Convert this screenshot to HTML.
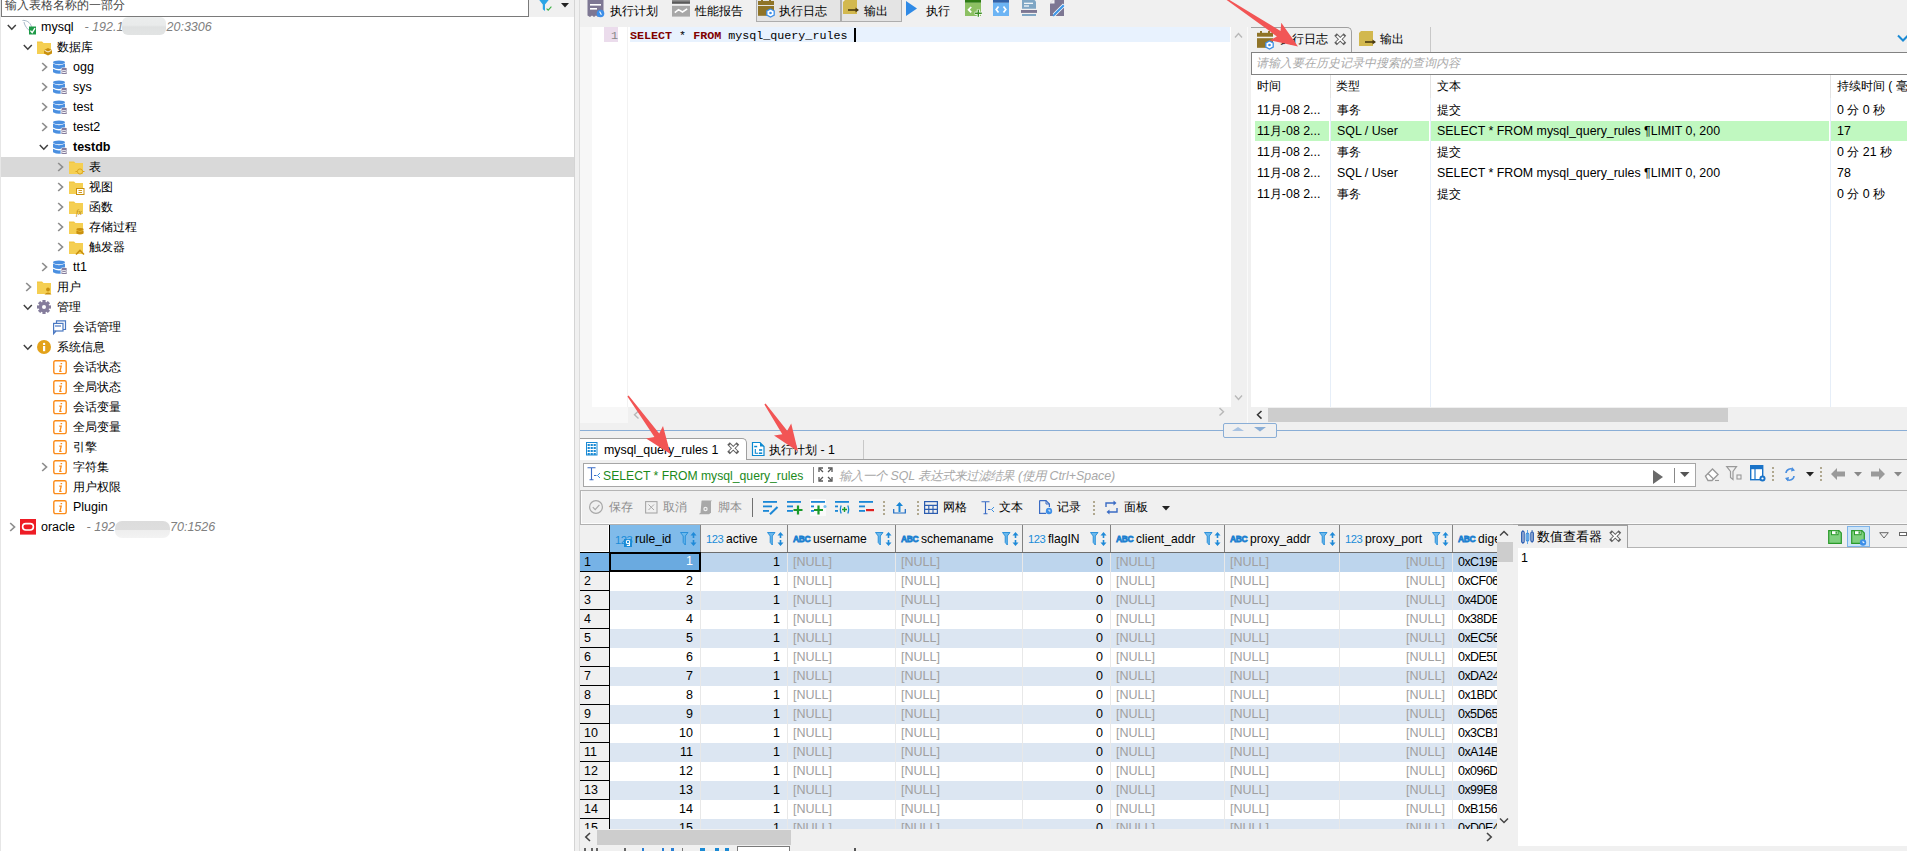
<!DOCTYPE html><html><head><meta charset="utf-8"><style>
*{margin:0;padding:0}
html,body{width:1907px;height:851px;overflow:hidden;background:#f0f0f0}
body{position:relative;font-family:"Liberation Sans",sans-serif;font-size:12px;color:#000}
.a{position:absolute}
.t{position:absolute;white-space:nowrap}
svg{position:absolute;overflow:visible}
b{font-weight:bold}
</style></head><body>
<div class="a" style="left:0px;top:0px;width:575px;height:851px;background:#fff"></div>
<div class="a" style="left:0px;top:0px;width:1px;height:851px;background:#e6e6e6"></div>
<div class="a" style="left:1px;top:-2px;width:528px;height:19px;background:#fff;border:1px solid #7a7a7a;box-sizing:border-box"></div>
<div class="t" style="left:5px;top:-3.5px;height:16px;line-height:16px;color:#444;font-size:12px">输入表格名称的一部分</div>
<div class="a" style="left:529px;top:0px;width:45px;height:17px;background:#f0f0f0"></div>
<svg style="left:538px;top:-1px" width="18" height="14" viewBox="0 0 18 14"><path d="M0.5 0 H11.5 L7 5.5 V12 L4.8 10.2 V5.5Z" fill="#2aa4e6"/><path d="M8.6 9.6 L10.2 11.2 L13.4 7.6" fill="none" stroke="#3cb043" stroke-width="1.1"/></svg>
<svg style="left:561px;top:3px" width="9" height="6" viewBox="0 0 9 6"><path d="M0 0 H8 L4 4.5Z" fill="#222"/></svg>
<div class="a" style="left:574px;top:0px;width:1px;height:851px;background:#d4d4d4"></div>
<div class="a" style="left:575px;top:0px;width:4px;height:851px;background:#f0f0f0"></div>
<div class="a" style="left:579px;top:0px;width:1px;height:851px;background:#dcdcdc"></div>
<div class="a" style="left:1px;top:157px;width:573px;height:20px;background:#d9d9d9"></div>
<svg style="left:7px;top:24px" width="10" height="7" viewBox="0 0 10 7"><path d="M0.8 1 L4.8 5.2 L8.8 1" fill="none" stroke="#404040" stroke-width="1.5"/></svg>
<svg style="left:21px;top:19px" width="18" height="18" viewBox="0 0 18 18"><path d="M1.5 1.5 C5 1 9 3 10.5 7.5 L11 10 M3 3 C3.5 6 5 8 7 10.5 L8 11" fill="none" stroke="#a8b8c8" stroke-width="1"/><rect x="8" y="7.5" width="7" height="8" fill="#1e9a48"/><path d="M9.4 11.6 L11.2 13.6 L14 9.2" fill="none" stroke="#fff" stroke-width="1.4"/></svg>
<div class="t" style="left:41px;top:17px;height:20px;line-height:20px;font-size:12.5px">mysql</div>
<svg style="left:23px;top:44px" width="10" height="7" viewBox="0 0 10 7"><path d="M0.8 1 L4.8 5.2 L8.8 1" fill="none" stroke="#404040" stroke-width="1.5"/></svg>
<svg style="left:37px;top:40px" width="16" height="16" viewBox="0 0 16 16"><path d="M0 1.5 H5 L6.5 3 H14 V14 H0Z" fill="#f2c744"/><rect x="0" y="3" width="14" height="11" fill="#f5cf52"/><path d="M7 10 L11 8 L15 10 L15 13.5 L11 15.5 L7 13.5Z" fill="#c9900e"/><path d="M7.5 10.3 L11 12 L14.5 10.3" fill="none" stroke="#fff" stroke-width="0.9"/></svg>
<div class="t" style="left:57px;top:37px;height:20px;line-height:20px;font-size:12px">数据库</div>
<svg style="left:40.5px;top:62px" width="7" height="10" viewBox="0 0 7 10"><path d="M1.2 1 L5.5 5 L1.2 9" fill="none" stroke="#8e8e8e" stroke-width="1.7"/></svg>
<svg style="left:53px;top:60px" width="16" height="16" viewBox="0 0 16 16">
<ellipse cx="6" cy="2.3" rx="6" ry="1.9" fill="#4a8fe0"/>
<path d="M0 3.6 Q6 6.8 12 3.6 V7.4 Q6 10.6 0 7.4Z" fill="#4a8fe0"/>
<path d="M0 8.8 Q6 12 12 8.8 V12.2 Q6 15.4 0 12.2Z" fill="#4a8fe0"/>
<rect x="7.6" y="7.4" width="7" height="7.4" rx="2" fill="#fff"/>
<ellipse cx="11.1" cy="9" rx="2.9" ry="1.2" fill="#857d9c"/>
<path d="M8.2 10.2 Q11.1 11.6 14 10.2 V11.3 Q11.1 12.7 8.2 11.3Z" fill="#857d9c"/>
<path d="M8.2 12.3 Q11.1 13.7 14 12.3 V13.4 Q11.1 14.8 8.2 13.4Z" fill="#857d9c"/></svg>
<div class="t" style="left:73px;top:57px;height:20px;line-height:20px;font-size:12.5px">ogg</div>
<svg style="left:40.5px;top:82px" width="7" height="10" viewBox="0 0 7 10"><path d="M1.2 1 L5.5 5 L1.2 9" fill="none" stroke="#8e8e8e" stroke-width="1.7"/></svg>
<svg style="left:53px;top:80px" width="16" height="16" viewBox="0 0 16 16">
<ellipse cx="6" cy="2.3" rx="6" ry="1.9" fill="#4a8fe0"/>
<path d="M0 3.6 Q6 6.8 12 3.6 V7.4 Q6 10.6 0 7.4Z" fill="#4a8fe0"/>
<path d="M0 8.8 Q6 12 12 8.8 V12.2 Q6 15.4 0 12.2Z" fill="#4a8fe0"/>
<rect x="7.6" y="7.4" width="7" height="7.4" rx="2" fill="#fff"/>
<ellipse cx="11.1" cy="9" rx="2.9" ry="1.2" fill="#857d9c"/>
<path d="M8.2 10.2 Q11.1 11.6 14 10.2 V11.3 Q11.1 12.7 8.2 11.3Z" fill="#857d9c"/>
<path d="M8.2 12.3 Q11.1 13.7 14 12.3 V13.4 Q11.1 14.8 8.2 13.4Z" fill="#857d9c"/></svg>
<div class="t" style="left:73px;top:77px;height:20px;line-height:20px;font-size:12.5px">sys</div>
<svg style="left:40.5px;top:102px" width="7" height="10" viewBox="0 0 7 10"><path d="M1.2 1 L5.5 5 L1.2 9" fill="none" stroke="#8e8e8e" stroke-width="1.7"/></svg>
<svg style="left:53px;top:100px" width="16" height="16" viewBox="0 0 16 16">
<ellipse cx="6" cy="2.3" rx="6" ry="1.9" fill="#4a8fe0"/>
<path d="M0 3.6 Q6 6.8 12 3.6 V7.4 Q6 10.6 0 7.4Z" fill="#4a8fe0"/>
<path d="M0 8.8 Q6 12 12 8.8 V12.2 Q6 15.4 0 12.2Z" fill="#4a8fe0"/>
<rect x="7.6" y="7.4" width="7" height="7.4" rx="2" fill="#fff"/>
<ellipse cx="11.1" cy="9" rx="2.9" ry="1.2" fill="#857d9c"/>
<path d="M8.2 10.2 Q11.1 11.6 14 10.2 V11.3 Q11.1 12.7 8.2 11.3Z" fill="#857d9c"/>
<path d="M8.2 12.3 Q11.1 13.7 14 12.3 V13.4 Q11.1 14.8 8.2 13.4Z" fill="#857d9c"/></svg>
<div class="t" style="left:73px;top:97px;height:20px;line-height:20px;font-size:12.5px">test</div>
<svg style="left:40.5px;top:122px" width="7" height="10" viewBox="0 0 7 10"><path d="M1.2 1 L5.5 5 L1.2 9" fill="none" stroke="#8e8e8e" stroke-width="1.7"/></svg>
<svg style="left:53px;top:120px" width="16" height="16" viewBox="0 0 16 16">
<ellipse cx="6" cy="2.3" rx="6" ry="1.9" fill="#4a8fe0"/>
<path d="M0 3.6 Q6 6.8 12 3.6 V7.4 Q6 10.6 0 7.4Z" fill="#4a8fe0"/>
<path d="M0 8.8 Q6 12 12 8.8 V12.2 Q6 15.4 0 12.2Z" fill="#4a8fe0"/>
<rect x="7.6" y="7.4" width="7" height="7.4" rx="2" fill="#fff"/>
<ellipse cx="11.1" cy="9" rx="2.9" ry="1.2" fill="#857d9c"/>
<path d="M8.2 10.2 Q11.1 11.6 14 10.2 V11.3 Q11.1 12.7 8.2 11.3Z" fill="#857d9c"/>
<path d="M8.2 12.3 Q11.1 13.7 14 12.3 V13.4 Q11.1 14.8 8.2 13.4Z" fill="#857d9c"/></svg>
<div class="t" style="left:73px;top:117px;height:20px;line-height:20px;font-size:12.5px">test2</div>
<svg style="left:39px;top:144px" width="10" height="7" viewBox="0 0 10 7"><path d="M0.8 1 L4.8 5.2 L8.8 1" fill="none" stroke="#404040" stroke-width="1.5"/></svg>
<svg style="left:53px;top:140px" width="16" height="16" viewBox="0 0 16 16">
<ellipse cx="6" cy="2.3" rx="6" ry="1.9" fill="#4a8fe0"/>
<path d="M0 3.6 Q6 6.8 12 3.6 V7.4 Q6 10.6 0 7.4Z" fill="#4a8fe0"/>
<path d="M0 8.8 Q6 12 12 8.8 V12.2 Q6 15.4 0 12.2Z" fill="#4a8fe0"/>
<rect x="7.6" y="7.4" width="7" height="7.4" rx="2" fill="#fff"/>
<ellipse cx="11.1" cy="9" rx="2.9" ry="1.2" fill="#857d9c"/>
<path d="M8.2 10.2 Q11.1 11.6 14 10.2 V11.3 Q11.1 12.7 8.2 11.3Z" fill="#857d9c"/>
<path d="M8.2 12.3 Q11.1 13.7 14 12.3 V13.4 Q11.1 14.8 8.2 13.4Z" fill="#857d9c"/></svg>
<div class="t" style="left:73px;top:137px;height:20px;line-height:20px;font-size:12.5px"><b>testdb</b></div>
<svg style="left:56.5px;top:162px" width="7" height="10" viewBox="0 0 7 10"><path d="M1.2 1 L5.5 5 L1.2 9" fill="none" stroke="#8e8e8e" stroke-width="1.7"/></svg>
<svg style="left:69px;top:160px" width="16" height="16" viewBox="0 0 16 16"><path d="M0 1.5 H5 L6.5 3 H14 V14 H0Z" fill="#f2c744"/><rect x="0" y="3" width="14" height="11" fill="#f5cf52"/><circle cx="11" cy="11.5" r="2.6" fill="none" stroke="#d9a520" stroke-width="1"/><path d="M6.5 11.5 H8 M14 11.5 H15.5" stroke="#d9a520" stroke-width="1"/></svg>
<div class="t" style="left:89px;top:157px;height:20px;line-height:20px;font-size:12px">表</div>
<svg style="left:56.5px;top:182px" width="7" height="10" viewBox="0 0 7 10"><path d="M1.2 1 L5.5 5 L1.2 9" fill="none" stroke="#8e8e8e" stroke-width="1.7"/></svg>
<svg style="left:69px;top:180px" width="16" height="16" viewBox="0 0 16 16"><path d="M0 1.5 H5 L6.5 3 H14 V14 H0Z" fill="#f2c744"/><rect x="0" y="3" width="14" height="11" fill="#f5cf52"/><rect x="7.5" y="8.5" width="7.5" height="6" fill="#fff" stroke="#c9900e" stroke-width="1"/><path d="M9.5 10.5 H13 M9.5 12.5 H13" stroke="#c9900e" stroke-width="0.9"/></svg>
<div class="t" style="left:89px;top:177px;height:20px;line-height:20px;font-size:12px">视图</div>
<svg style="left:56.5px;top:202px" width="7" height="10" viewBox="0 0 7 10"><path d="M1.2 1 L5.5 5 L1.2 9" fill="none" stroke="#8e8e8e" stroke-width="1.7"/></svg>
<svg style="left:69px;top:200px" width="16" height="16" viewBox="0 0 16 16"><path d="M0 1.5 H5 L6.5 3 H14 V14 H0Z" fill="#f2c744"/><rect x="0" y="3" width="14" height="11" fill="#f5cf52"/><text x="7" y="15" font-size="8" font-style="italic" fill="#b8860b" font-family="Liberation Serif">fx</text></svg>
<div class="t" style="left:89px;top:197px;height:20px;line-height:20px;font-size:12px">函数</div>
<svg style="left:56.5px;top:222px" width="7" height="10" viewBox="0 0 7 10"><path d="M1.2 1 L5.5 5 L1.2 9" fill="none" stroke="#8e8e8e" stroke-width="1.7"/></svg>
<svg style="left:69px;top:220px" width="16" height="16" viewBox="0 0 16 16"><path d="M0 1.5 H5 L6.5 3 H14 V14 H0Z" fill="#f2c744"/><rect x="0" y="3" width="14" height="11" fill="#f5cf52"/><ellipse cx="11" cy="9.5" rx="3.6" ry="1.4" fill="#c9900e"/><path d="M7.4 10.5 Q11 12.4 14.6 10.5 V13.6 Q11 15.5 7.4 13.6Z" fill="#c9900e"/></svg>
<div class="t" style="left:89px;top:217px;height:20px;line-height:20px;font-size:12px">存储过程</div>
<svg style="left:56.5px;top:242px" width="7" height="10" viewBox="0 0 7 10"><path d="M1.2 1 L5.5 5 L1.2 9" fill="none" stroke="#8e8e8e" stroke-width="1.7"/></svg>
<svg style="left:69px;top:240px" width="16" height="16" viewBox="0 0 16 16"><path d="M0 1.5 H5 L6.5 3 H14 V14 H0Z" fill="#f2c744"/><rect x="0" y="3" width="14" height="11" fill="#f5cf52"/><path d="M7 14.5 L11 10.5 L15 14.5" fill="none" stroke="#c9900e" stroke-width="1.6"/></svg>
<div class="t" style="left:89px;top:237px;height:20px;line-height:20px;font-size:12px">触发器</div>
<svg style="left:40.5px;top:262px" width="7" height="10" viewBox="0 0 7 10"><path d="M1.2 1 L5.5 5 L1.2 9" fill="none" stroke="#8e8e8e" stroke-width="1.7"/></svg>
<svg style="left:53px;top:260px" width="16" height="16" viewBox="0 0 16 16">
<ellipse cx="6" cy="2.3" rx="6" ry="1.9" fill="#4a8fe0"/>
<path d="M0 3.6 Q6 6.8 12 3.6 V7.4 Q6 10.6 0 7.4Z" fill="#4a8fe0"/>
<path d="M0 8.8 Q6 12 12 8.8 V12.2 Q6 15.4 0 12.2Z" fill="#4a8fe0"/>
<rect x="7.6" y="7.4" width="7" height="7.4" rx="2" fill="#fff"/>
<ellipse cx="11.1" cy="9" rx="2.9" ry="1.2" fill="#857d9c"/>
<path d="M8.2 10.2 Q11.1 11.6 14 10.2 V11.3 Q11.1 12.7 8.2 11.3Z" fill="#857d9c"/>
<path d="M8.2 12.3 Q11.1 13.7 14 12.3 V13.4 Q11.1 14.8 8.2 13.4Z" fill="#857d9c"/></svg>
<div class="t" style="left:73px;top:257px;height:20px;line-height:20px;font-size:12.5px">tt1</div>
<svg style="left:24.5px;top:282px" width="7" height="10" viewBox="0 0 7 10"><path d="M1.2 1 L5.5 5 L1.2 9" fill="none" stroke="#8e8e8e" stroke-width="1.7"/></svg>
<svg style="left:37px;top:280px" width="16" height="16" viewBox="0 0 16 16"><path d="M0 1.5 H5 L6.5 3 H14 V14 H0Z" fill="#f2c744"/><rect x="0" y="3" width="14" height="11" fill="#f5cf52"/><circle cx="11" cy="9.5" r="1.9" fill="#c9900e"/><path d="M7.5 14.5 Q11 10.5 14.5 14.5Z" fill="#c9900e"/></svg>
<div class="t" style="left:57px;top:277px;height:20px;line-height:20px;font-size:12px">用户</div>
<svg style="left:23px;top:304px" width="10" height="7" viewBox="0 0 10 7"><path d="M0.8 1 L4.8 5.2 L8.8 1" fill="none" stroke="#404040" stroke-width="1.5"/></svg>
<svg style="left:37px;top:300px" width="16" height="16" viewBox="0 0 16 16"><g transform="translate(7,7)"><circle r="5.2" fill="#857d9c"/><rect x="-1.6" y="-7" width="3.2" height="3" fill="#857d9c" transform="rotate(0)"/><rect x="-1.6" y="-7" width="3.2" height="3" fill="#857d9c" transform="rotate(45)"/><rect x="-1.6" y="-7" width="3.2" height="3" fill="#857d9c" transform="rotate(90)"/><rect x="-1.6" y="-7" width="3.2" height="3" fill="#857d9c" transform="rotate(135)"/><rect x="-1.6" y="-7" width="3.2" height="3" fill="#857d9c" transform="rotate(180)"/><rect x="-1.6" y="-7" width="3.2" height="3" fill="#857d9c" transform="rotate(225)"/><rect x="-1.6" y="-7" width="3.2" height="3" fill="#857d9c" transform="rotate(270)"/><rect x="-1.6" y="-7" width="3.2" height="3" fill="#857d9c" transform="rotate(315)"/><circle r="2" fill="#fff"/></g></svg>
<div class="t" style="left:57px;top:297px;height:20px;line-height:20px;font-size:12px">管理</div>
<svg style="left:53px;top:320px" width="16" height="16" viewBox="0 0 16 16"><path d="M3.5 3.2 V0.8 H12.5 V9.5 H10" fill="none" stroke="#4a78c2" stroke-width="1.2"/><rect x="0.6" y="3.4" width="9.4" height="7.6" fill="#fff" stroke="#4a78c2" stroke-width="1.2"/><path d="M2 6 H8" stroke="#4a78c2" stroke-width="1.2"/><path d="M0.6 11 V13.6 L3 11" fill="none" stroke="#4a78c2" stroke-width="1.2"/></svg>
<div class="t" style="left:73px;top:317px;height:20px;line-height:20px;font-size:12px">会话管理</div>
<svg style="left:23px;top:344px" width="10" height="7" viewBox="0 0 10 7"><path d="M0.8 1 L4.8 5.2 L8.8 1" fill="none" stroke="#404040" stroke-width="1.5"/></svg>
<svg style="left:37px;top:340px" width="16" height="16" viewBox="0 0 16 16"><circle cx="7" cy="7" r="7" fill="#e3a21a"/><rect x="6" y="6" width="2.2" height="5.2" fill="#fff"/><circle cx="7.1" cy="3.9" r="1.2" fill="#fff"/></svg>
<div class="t" style="left:57px;top:337px;height:20px;line-height:20px;font-size:12px">系统信息</div>
<svg style="left:53px;top:360px" width="16" height="16" viewBox="0 0 16 16"><rect x="0.8" y="0.8" width="12.4" height="12.8" rx="1.5" fill="#fff" stroke="#fb8c1a" stroke-width="1.4"/><path d="M7.6 3.6 h1.5 M6.2 6.2 H8.2 L6.9 11.4 H8.6" fill="none" stroke="#fb8c1a" stroke-width="1.3"/></svg>
<div class="t" style="left:73px;top:357px;height:20px;line-height:20px;font-size:12px">会话状态</div>
<svg style="left:53px;top:380px" width="16" height="16" viewBox="0 0 16 16"><rect x="0.8" y="0.8" width="12.4" height="12.8" rx="1.5" fill="#fff" stroke="#fb8c1a" stroke-width="1.4"/><path d="M7.6 3.6 h1.5 M6.2 6.2 H8.2 L6.9 11.4 H8.6" fill="none" stroke="#fb8c1a" stroke-width="1.3"/></svg>
<div class="t" style="left:73px;top:377px;height:20px;line-height:20px;font-size:12px">全局状态</div>
<svg style="left:53px;top:400px" width="16" height="16" viewBox="0 0 16 16"><rect x="0.8" y="0.8" width="12.4" height="12.8" rx="1.5" fill="#fff" stroke="#fb8c1a" stroke-width="1.4"/><path d="M7.6 3.6 h1.5 M6.2 6.2 H8.2 L6.9 11.4 H8.6" fill="none" stroke="#fb8c1a" stroke-width="1.3"/></svg>
<div class="t" style="left:73px;top:397px;height:20px;line-height:20px;font-size:12px">会话变量</div>
<svg style="left:53px;top:420px" width="16" height="16" viewBox="0 0 16 16"><rect x="0.8" y="0.8" width="12.4" height="12.8" rx="1.5" fill="#fff" stroke="#fb8c1a" stroke-width="1.4"/><path d="M7.6 3.6 h1.5 M6.2 6.2 H8.2 L6.9 11.4 H8.6" fill="none" stroke="#fb8c1a" stroke-width="1.3"/></svg>
<div class="t" style="left:73px;top:417px;height:20px;line-height:20px;font-size:12px">全局变量</div>
<svg style="left:53px;top:440px" width="16" height="16" viewBox="0 0 16 16"><rect x="0.8" y="0.8" width="12.4" height="12.8" rx="1.5" fill="#fff" stroke="#fb8c1a" stroke-width="1.4"/><path d="M7.6 3.6 h1.5 M6.2 6.2 H8.2 L6.9 11.4 H8.6" fill="none" stroke="#fb8c1a" stroke-width="1.3"/></svg>
<div class="t" style="left:73px;top:437px;height:20px;line-height:20px;font-size:12px">引擎</div>
<svg style="left:40.5px;top:462px" width="7" height="10" viewBox="0 0 7 10"><path d="M1.2 1 L5.5 5 L1.2 9" fill="none" stroke="#8e8e8e" stroke-width="1.7"/></svg>
<svg style="left:53px;top:460px" width="16" height="16" viewBox="0 0 16 16"><rect x="0.8" y="0.8" width="12.4" height="12.8" rx="1.5" fill="#fff" stroke="#fb8c1a" stroke-width="1.4"/><path d="M7.6 3.6 h1.5 M6.2 6.2 H8.2 L6.9 11.4 H8.6" fill="none" stroke="#fb8c1a" stroke-width="1.3"/></svg>
<div class="t" style="left:73px;top:457px;height:20px;line-height:20px;font-size:12px">字符集</div>
<svg style="left:53px;top:480px" width="16" height="16" viewBox="0 0 16 16"><rect x="0.8" y="0.8" width="12.4" height="12.8" rx="1.5" fill="#fff" stroke="#fb8c1a" stroke-width="1.4"/><path d="M7.6 3.6 h1.5 M6.2 6.2 H8.2 L6.9 11.4 H8.6" fill="none" stroke="#fb8c1a" stroke-width="1.3"/></svg>
<div class="t" style="left:73px;top:477px;height:20px;line-height:20px;font-size:12px">用户权限</div>
<svg style="left:53px;top:500px" width="16" height="16" viewBox="0 0 16 16"><rect x="0.8" y="0.8" width="12.4" height="12.8" rx="1.5" fill="#fff" stroke="#fb8c1a" stroke-width="1.4"/><path d="M7.6 3.6 h1.5 M6.2 6.2 H8.2 L6.9 11.4 H8.6" fill="none" stroke="#fb8c1a" stroke-width="1.3"/></svg>
<div class="t" style="left:73px;top:497px;height:20px;line-height:20px;font-size:12.5px">Plugin</div>
<svg style="left:8.5px;top:522px" width="7" height="10" viewBox="0 0 7 10"><path d="M1.2 1 L5.5 5 L1.2 9" fill="none" stroke="#8e8e8e" stroke-width="1.7"/></svg>
<svg style="left:20px;top:519px" width="16" height="16" viewBox="0 0 16 16"><rect x="0" y="0" width="16" height="15.6" fill="#ee1c25"/><rect x="2.6" y="4.6" width="10.8" height="6.4" rx="3.2" fill="none" stroke="#fff" stroke-width="1.6"/></svg>
<div class="t" style="left:41px;top:517px;height:20px;line-height:20px;font-size:12.5px">oracle</div>
<div class="t" style="left:84.5px;top:17px;height:20px;line-height:20px;font-size:12.5px;font-style:italic;color:#808080">- 192.1</div>
<div class="t" style="left:166.5px;top:17px;height:20px;line-height:20px;font-size:12.5px;font-style:italic;color:#808080">20:3306</div>
<div class="a" style="left:122px;top:17px;width:44px;height:18px;background:linear-gradient(#ebeded,#e9ebeb 45%,#dfe1e1 55%,#e2e4e4);border-radius:6px;filter:blur(0.6px)"></div>
<div class="t" style="left:86.5px;top:517px;height:20px;line-height:20px;font-size:12.5px;font-style:italic;color:#808080">- 192</div>
<div class="t" style="left:170px;top:517px;height:20px;line-height:20px;font-size:12.5px;font-style:italic;color:#808080">70:1526</div>
<div class="a" style="left:115px;top:521px;width:55px;height:17px;background:linear-gradient(#dcdcdc,#dedede 50%,#eeeeee 55%,#f3f3f3);border-radius:7px;filter:blur(0.6px)"></div>
<div class="a" style="left:580px;top:0px;width:668px;height:27px;background:#f0f0f0"></div>
<div class="a" style="left:756px;top:-2px;width:85px;height:24px;background:#e4e4e4;border:1px solid #adadad;box-sizing:border-box"></div>
<div class="a" style="left:841px;top:-2px;width:61px;height:24px;background:#e4e4e4;border:1px solid #adadad;box-sizing:border-box"></div>
<svg style="left:587px;top:0px" width="18" height="19" viewBox="0 0 18 19"><path d="M0.5 -1 H16.5 V12 L11 17 L9 15.5 L7 17 L5 15.5 L3 17 L0.5 15.5Z" fill="#7d7793"/><rect x="3" y="4" width="11" height="1.6" fill="#fff"/><rect x="3" y="8" width="7" height="1.6" fill="#fff"/><circle cx="13.5" cy="13.5" r="3.8" fill="#3d8fe8"/><path d="M12.6 11.6 L14.4 14.8" stroke="#fff" stroke-width="1.1"/></svg>
<div class="t" style="left:610px;top:1px;height:20px;line-height:20px;font-size:12px">执行计划</div>
<svg style="left:672px;top:0px" width="19" height="18" viewBox="0 0 19 18"><rect x="0" y="0" width="18" height="0.8" fill="#777"/><rect x="0" y="1.2" width="18" height="2.6" fill="#5a5a5a"/><rect x="0" y="5.8" width="18" height="10.8" fill="#a8a8a8"/><path d="M2.8 12.6 L6.5 9.6 L10.5 12 L15.2 8.8" fill="none" stroke="#fff" stroke-width="1.6"/></svg>
<div class="t" style="left:695px;top:1px;height:20px;line-height:20px;font-size:12px">性能报告</div>
<svg style="left:758px;top:-1px" width="19" height="19" viewBox="0 0 19 19"><rect x="0" y="2" width="16" height="4" fill="#8f7428"/><rect x="3" y="0" width="2" height="2.5" fill="#8f7428"/><rect x="11" y="0" width="2" height="2.5" fill="#8f7428"/><rect x="0" y="7" width="16" height="9.8" fill="#8f7428"/><path d="M12.5 10 L16.2 12 V16 L12.5 18 L8.8 16 V12Z" fill="#fff" stroke="#3d8fe8" stroke-width="1.3"/><circle cx="12.5" cy="14" r="1.3" fill="#3d8fe8"/></svg>
<div class="t" style="left:779px;top:1px;height:20px;line-height:20px;font-size:12px">执行日志</div>
<svg style="left:843px;top:-1px" width="18" height="18" viewBox="0 0 18 18"><path d="M0 0 H14 V15 H0Z" fill="#d2b84e"/><path d="M0 0 L3 0 L0 3Z" fill="#f0f0f0"/><path d="M5 11 H14.5" stroke="#4a3a10" stroke-width="1.6"/><path d="M12.5 8.5 L16 11 L12.5 13.5Z" fill="#4a3a10"/></svg>
<div class="t" style="left:864px;top:1px;height:20px;line-height:20px;font-size:12px">输出</div>
<svg style="left:906px;top:1px" width="12" height="17" viewBox="0 0 12 17"><path d="M0 0 L11 7.5 L0 15Z" fill="#2f8ae6"/></svg>
<div class="t" style="left:926px;top:1px;height:20px;line-height:20px;font-size:12px">执行</div>
<svg style="left:965px;top:-1px" width="19" height="19" viewBox="0 0 19 19"><rect x="0" y="0" width="16" height="3.8" fill="#2d7a14"/><rect x="0" y="3.8" width="16" height="13.2" fill="#8cc063"/><path d="M6.2 8 L3.6 10.7 L6.2 13.4" fill="none" stroke="#fff" stroke-width="1.8"/><path d="M13.3 10.5 V18 M9.6 14.2 H17" stroke="#fff" stroke-width="3"/><path d="M13.3 10.8 V17.8 M9.9 14.2 H16.8" stroke="#3d8f25" stroke-width="1.4"/></svg>
<svg style="left:993px;top:-1px" width="17" height="18" viewBox="0 0 17 18"><rect x="0" y="0" width="16" height="3.8" fill="#3162a8"/><rect x="0" y="3.8" width="16" height="13.2" fill="#6cb4f4"/><path d="M5.5 7.5 L3.2 10.5 L5.5 13.5 M10.5 7.5 L12.8 10.5 L10.5 13.5" fill="none" stroke="#fff" stroke-width="1.7"/></svg>
<svg style="left:1021px;top:-1px" width="17" height="18" viewBox="0 0 17 18"><path d="M1 0 H12.5 L15 2.5 V9.8 H1Z" fill="#7fa6c4"/><rect x="3" y="3.7" width="9" height="1.2" fill="#fff"/><rect x="3" y="6.4" width="5" height="1.2" fill="#fff"/><rect x="0" y="11" width="16" height="2.9" fill="#7d7793"/><rect x="1" y="15" width="14" height="2" fill="#7fa6c4"/></svg>
<svg style="left:1050px;top:-1px" width="16" height="18" viewBox="0 0 16 18"><path d="M0 4.5 L4.5 0 H14 V17 H0Z" fill="#7d7793"/><path d="M0 4.5 H4.5 V0Z" fill="#fff" opacity="0.9"/><path d="M4 16 L14.2 5.8" stroke="#fff" stroke-width="3.6"/><path d="M4.2 15.8 L13.8 6.2" stroke="#3d97e8" stroke-width="2.2"/><path d="M3 17 L4.8 15.2" stroke="#3d97e8" stroke-width="1.4"/></svg>
<div class="a" style="left:580px;top:27px;width:12px;height:396px;background:#f7f7f7"></div>
<div class="a" style="left:592px;top:27px;width:639px;height:380px;background:#fff"></div>
<div class="a" style="left:580px;top:407px;width:48px;height:16px;background:#f7f7f7"></div>
<div class="a" style="left:627px;top:27px;width:1px;height:380px;background:#f2f2f2"></div>
<div class="a" style="left:604px;top:27px;width:14px;height:15px;background:#ebdcec"></div>
<div class="t" style="left:611px;top:28.5px;height:15px;line-height:15px;font-family:'Liberation Mono',monospace;font-size:11.7px;color:#888">1</div>
<div class="a" style="left:630px;top:27px;width:600px;height:15px;background:#e8f2fe"></div>
<div class="t" style="left:630px;top:28.5px;height:15px;line-height:15px;font-family:'Liberation Mono',monospace;font-size:11.7px;color:#000"><b style="color:#7f0055;color:#800000">SELECT</b> * <b style="color:#800000">FROM</b> mysql_query_rules </div>
<div class="a" style="left:854px;top:28px;width:2px;height:14px;background:#000"></div>
<div class="a" style="left:1231px;top:27px;width:16px;height:380px;background:#f0f0f0"></div>
<div class="a" style="left:1247px;top:27px;width:1px;height:396px;background:#fafafa"></div>
<svg style="left:1234px;top:32px" width="10" height="7" viewBox="0 0 10 7"><path d="M1 5.5 L4.5 1.5 L8 5.5" fill="none" stroke="#b8b8b8" stroke-width="1.4"/></svg>
<svg style="left:1234px;top:394px" width="10" height="7" viewBox="0 0 10 7"><path d="M1 1.5 L4.5 5.5 L8 1.5" fill="none" stroke="#b8b8b8" stroke-width="1.4"/></svg>
<div class="a" style="left:628px;top:407px;width:602px;height:16px;background:#f0f0f0"></div>
<svg style="left:633px;top:410px" width="7" height="10" viewBox="0 0 7 10"><path d="M5.5 1 L1.5 4.8 L5.5 8.6" fill="none" stroke="#b8b8b8" stroke-width="1.4"/></svg>
<svg style="left:1218px;top:407px" width="7" height="10" viewBox="0 0 7 10"><path d="M1.5 1 L5.5 4.8 L1.5 8.6" fill="none" stroke="#b8b8b8" stroke-width="1.4"/></svg>
<div class="a" style="left:1248px;top:27px;width:659px;height:396px;background:#f0f0f0"></div>
<div class="a" style="left:1251px;top:27px;width:101px;height:26px;background:#f0f0f0;border-top:1px solid #a0a0a0;border-right:1px solid #a0a0a0;border-top-right-radius:5px;box-sizing:border-box"></div>
<svg style="left:1257px;top:31px" width="19" height="19" viewBox="0 0 19 19"><rect x="0" y="1.8" width="16" height="3.9" fill="#8f7428"/><rect x="3" y="0" width="2" height="2.3" fill="#8f7428"/><rect x="11" y="0" width="2" height="2.3" fill="#8f7428"/><rect x="0" y="7.2" width="16" height="9.6" fill="#8f7428"/><path d="M12.5 10 L16.2 12 V16 L12.5 18 L8.8 16 V12Z" fill="#fff" stroke="#3d8fe8" stroke-width="1.3"/><circle cx="12.5" cy="14" r="1.3" fill="#3d8fe8"/></svg>
<div class="t" style="left:1280px;top:29px;height:20px;line-height:20px;font-size:12px">执行日志</div>
<svg style="left:1335px;top:34px" width="11" height="11" viewBox="0 0 11 11"><path d="M1.8 1.8 L8.7 8.7 M8.7 1.8 L1.8 8.7" stroke="#606060" stroke-width="3.6" stroke-linecap="square"/><path d="M1.8 1.8 L8.7 8.7 M8.7 1.8 L1.8 8.7" stroke="#fff" stroke-width="1.7"/></svg>
<svg style="left:1359px;top:31px" width="18" height="17" viewBox="0 0 18 17"><path d="M2 0 H14 V15 H0 V2Z" fill="#d2b84e"/><path d="M6 11 H15.5" stroke="#4a3a10" stroke-width="1.6"/><path d="M13.5 8.5 L17 11 L13.5 13.5Z" fill="#4a3a10"/></svg>
<div class="t" style="left:1380px;top:29px;height:20px;line-height:20px;font-size:12px">输出</div>
<div class="a" style="left:1430px;top:27px;width:1px;height:26px;background:#c8c8c8"></div>
<svg style="left:1897px;top:34px" width="12" height="9" viewBox="0 0 12 9"><path d="M1 1.5 L6 6.5 L11 1.5" fill="none" stroke="#1a8ad4" stroke-width="2"/></svg>
<div class="a" style="left:1251px;top:52px;width:660px;height:23px;background:#fff;border:1px solid #828282;box-sizing:border-box"></div>
<div class="t" style="left:1256px;top:53px;height:20px;line-height:20px;font-size:12px;font-style:italic;color:#aaa">请输入要在历史记录中搜索的查询内容</div>
<div class="a" style="left:1251px;top:75px;width:656px;height:332px;background:#fff"></div>
<div class="a" style="left:1330px;top:75px;width:1px;height:23px;background:#e3e3e3"></div>
<div class="a" style="left:1330px;top:98px;width:1px;height:309px;background:#e6eef8"></div>
<div class="a" style="left:1430px;top:75px;width:1px;height:23px;background:#e3e3e3"></div>
<div class="a" style="left:1430px;top:98px;width:1px;height:309px;background:#e6eef8"></div>
<div class="a" style="left:1830px;top:75px;width:1px;height:23px;background:#e3e3e3"></div>
<div class="a" style="left:1830px;top:98px;width:1px;height:309px;background:#e6eef8"></div>
<div class="t" style="left:1257px;top:76px;height:21px;line-height:21px;font-size:12px">时间</div>
<div class="t" style="left:1336px;top:76px;height:21px;line-height:21px;font-size:12px">类型</div>
<div class="t" style="left:1437px;top:76px;height:21px;line-height:21px;font-size:12px">文本</div>
<div class="t" style="left:1837px;top:76px;height:21px;line-height:21px;font-size:12px">持续时间 ( 毫</div>
<div class="t" style="left:1257px;top:100px;height:21px;line-height:21px;font-size:12.4px">11月-08 2...</div>
<div class="t" style="left:1337px;top:100px;height:21px;line-height:21px;font-size:12.4px">事务</div>
<div class="t" style="left:1437px;top:100px;height:21px;line-height:21px;font-size:12.4px">提交</div>
<div class="t" style="left:1837px;top:100px;height:21px;line-height:21px;font-size:12.4px">0 分 0 秒</div>
<div class="a" style="left:1255px;top:121px;width:74px;height:20px;background:#c0f8c0"></div>
<div class="a" style="left:1331px;top:121px;width:98px;height:20px;background:#c0f8c0"></div>
<div class="a" style="left:1431px;top:121px;width:398px;height:20px;background:#c0f8c0"></div>
<div class="a" style="left:1831px;top:121px;width:76px;height:20px;background:#c0f8c0"></div>
<div class="t" style="left:1257px;top:121px;height:21px;line-height:21px;font-size:12.4px">11月-08 2...</div>
<div class="t" style="left:1337px;top:121px;height:21px;line-height:21px;font-size:12.4px">SQL / User</div>
<div class="t" style="left:1437px;top:121px;height:21px;line-height:21px;font-size:12.4px">SELECT * FROM mysql_query_rules ¶LIMIT 0, 200</div>
<div class="t" style="left:1837px;top:121px;height:21px;line-height:21px;font-size:12.4px">17</div>
<div class="t" style="left:1257px;top:142px;height:21px;line-height:21px;font-size:12.4px">11月-08 2...</div>
<div class="t" style="left:1337px;top:142px;height:21px;line-height:21px;font-size:12.4px">事务</div>
<div class="t" style="left:1437px;top:142px;height:21px;line-height:21px;font-size:12.4px">提交</div>
<div class="t" style="left:1837px;top:142px;height:21px;line-height:21px;font-size:12.4px">0 分 21 秒</div>
<div class="t" style="left:1257px;top:163px;height:21px;line-height:21px;font-size:12.4px">11月-08 2...</div>
<div class="t" style="left:1337px;top:163px;height:21px;line-height:21px;font-size:12.4px">SQL / User</div>
<div class="t" style="left:1437px;top:163px;height:21px;line-height:21px;font-size:12.4px">SELECT * FROM mysql_query_rules ¶LIMIT 0, 200</div>
<div class="t" style="left:1837px;top:163px;height:21px;line-height:21px;font-size:12.4px">78</div>
<div class="t" style="left:1257px;top:184px;height:21px;line-height:21px;font-size:12.4px">11月-08 2...</div>
<div class="t" style="left:1337px;top:184px;height:21px;line-height:21px;font-size:12.4px">事务</div>
<div class="t" style="left:1437px;top:184px;height:21px;line-height:21px;font-size:12.4px">提交</div>
<div class="t" style="left:1837px;top:184px;height:21px;line-height:21px;font-size:12.4px">0 分 0 秒</div>
<div class="a" style="left:1251px;top:407px;width:656px;height:16px;background:#f0f0f0"></div>
<svg style="left:1256px;top:410px" width="7" height="10" viewBox="0 0 7 10"><path d="M5.5 1 L1.5 4.8 L5.5 8.6" fill="none" stroke="#333" stroke-width="1.5"/></svg>
<div class="a" style="left:1268px;top:408px;width:460px;height:14px;background:#cdcdcd"></div>
<div class="a" style="left:580px;top:423px;width:1327px;height:15px;background:#f0f0f0"></div>
<div class="a" style="left:580px;top:430px;width:643px;height:1px;background:#8aaed6"></div>
<div class="a" style="left:1277px;top:430px;width:630px;height:1px;background:#8aaed6"></div>
<div class="a" style="left:1223px;top:423px;width:54px;height:15px;background:#f0f0f0;border:1px solid #8aaed6;border-radius:2px;box-sizing:border-box"></div>
<svg style="left:1232px;top:427px" width="12" height="5" viewBox="0 0 12 5"><path d="M0 4 L6 0 L12 4Z" fill="#a9c3e2"/></svg>
<svg style="left:1254px;top:427px" width="12" height="6" viewBox="0 0 12 6"><path d="M0 0 H12 L6 4.5Z" fill="#8aaed6"/></svg>
<div class="a" style="left:580px;top:438px;width:1327px;height:22px;background:#f0f0f0"></div>
<div class="a" style="left:580px;top:459px;width:1327px;height:1px;background:#a0a0a0"></div>
<div class="a" style="left:580px;top:438px;width:167px;height:22px;background:#fff;border-top:1px solid #a0a0a0;border-right:1px solid #a0a0a0;border-top-right-radius:5px;box-sizing:border-box"></div>
<svg style="left:586px;top:442px" width="12" height="14" viewBox="0 0 12 14"><rect x="0.5" y="0.5" width="10.5" height="12.5" fill="#fff" stroke="#1a8ad4" stroke-width="1"/><rect x="1.6" y="2" width="2.2" height="2" fill="#1a8ad4"/><rect x="1.6" y="5" width="2.2" height="2" fill="#1a8ad4"/><rect x="1.6" y="8" width="2.2" height="2" fill="#1a8ad4"/><rect x="1.6" y="11" width="2.2" height="2" fill="#1a8ad4"/><rect x="4.6" y="2" width="2.2" height="2" fill="#1a8ad4"/><rect x="4.6" y="5" width="2.2" height="2" fill="#1a8ad4"/><rect x="4.6" y="8" width="2.2" height="2" fill="#1a8ad4"/><rect x="4.6" y="11" width="2.2" height="2" fill="#1a8ad4"/><rect x="7.6" y="2" width="2.2" height="2" fill="#1a8ad4"/><rect x="7.6" y="5" width="2.2" height="2" fill="#1a8ad4"/><rect x="7.6" y="8" width="2.2" height="2" fill="#1a8ad4"/><rect x="7.6" y="11" width="2.2" height="2" fill="#1a8ad4"/></svg>
<div class="t" style="left:604px;top:440px;height:21px;line-height:21px;font-size:12.4px">mysql_query_rules 1</div>
<svg style="left:728px;top:443px" width="11" height="11" viewBox="0 0 11 11"><path d="M1.8 1.8 L8.7 8.7 M8.7 1.8 L1.8 8.7" stroke="#606060" stroke-width="3.6" stroke-linecap="square"/><path d="M1.8 1.8 L8.7 8.7 M8.7 1.8 L1.8 8.7" stroke="#fff" stroke-width="1.7"/></svg>
<svg style="left:751px;top:441px" width="15" height="16" viewBox="0 0 15 16"><path d="M1.5 1.5 H9 L13 5.5 V14.5 H1.5Z" fill="#fff" stroke="#0a88d0" stroke-width="1.2"/><path d="M9 1.5 V5.5 H13Z" fill="#0a88d0"/><rect x="3.2" y="4.8" width="3" height="1.5" fill="#0a88d0"/><path d="M4.3 8 V12.3 H7.3" fill="none" stroke="#0a88d0" stroke-width="1.1"/><rect x="8" y="8.2" width="3.2" height="1.6" fill="#0a88d0"/><rect x="8" y="11.4" width="3.2" height="1.6" fill="#0a88d0"/></svg>
<div class="t" style="left:769px;top:440px;height:21px;line-height:21px;font-size:12.4px">执行计划 - 1</div>
<div class="a" style="left:863px;top:440px;width:1px;height:19px;background:#c8c8c8"></div>
<div class="a" style="left:583px;top:463px;width:1113px;height:24px;background:#fff;border:1px solid #a6a6a6;box-sizing:border-box"></div>
<svg style="left:587px;top:467px" width="15" height="14" viewBox="0 0 15 14"><path d="M0.5 0.8 H8.5 M4.5 0.8 V12.8 M2.5 12.8 H6.5" stroke="#3a6bc4" stroke-width="1.1" fill="none"/><path d="M7 8.5 H9.5" stroke="#3a6bc4" stroke-width="1"/><path d="M13 6 L10.5 8.5 L13 11" stroke="#3a8fe0" fill="none" stroke-width="1"/></svg>
<div class="t" style="left:603px;top:465px;height:22px;line-height:22px;font-size:12.2px;color:#1b8a1b">SELECT * FROM mysql_query_rules</div>
<div class="a" style="left:813px;top:467px;width:1px;height:16px;background:#888"></div>
<svg style="left:818px;top:467px" width="15" height="15" viewBox="0 0 15 15"><path d="M1 5 V1 H5 M10 1 H14 V5 M14 10 V14 H10 M5 14 H1 V10" fill="none" stroke="#555" stroke-width="1.3"/><path d="M1.5 1.5 L5 5 M13.5 1.5 L10 5 M13.5 13.5 L10 10 M1.5 13.5 L5 10" stroke="#555" stroke-width="1.3"/></svg>
<div class="t" style="left:839px;top:465px;height:22px;line-height:22px;font-size:12.4px;font-style:italic;color:#a8a8a8">输入一个 SQL 表达式来过滤结果 (使用 Ctrl+Space)</div>
<svg style="left:1653px;top:470px" width="12" height="15" viewBox="0 0 12 15"><path d="M0 0 L10 7 L0 14Z" fill="#6a6a6a"/></svg>
<div class="a" style="left:1674px;top:468px;width:1px;height:15px;background:#888"></div>
<svg style="left:1680px;top:472px" width="10" height="6" viewBox="0 0 10 6"><path d="M0 0 H9.5 L4.75 5Z" fill="#555"/></svg>
<svg style="left:1704px;top:466px" width="17" height="17" viewBox="0 0 17 17"><path d="M1.5 10 L8.5 3 L14 8.5 L8 14.5 H4Z" fill="#fff" stroke="#999" stroke-width="1.4"/><path d="M4 7.5 L9.5 13" stroke="#999" stroke-width="1.2"/><path d="M11 14.5 H15" stroke="#999" stroke-width="1.1"/></svg>
<svg style="left:1726px;top:466px" width="17" height="17" viewBox="0 0 17 17"><path d="M0.7 0.7 H10.5 L7 5.5 V13.5 L4.5 11.5 V5.5Z" fill="none" stroke="#999" stroke-width="1.2"/><rect x="11" y="9" width="4" height="4" fill="none" stroke="#999" stroke-width="1.1"/></svg>
<svg style="left:1750px;top:465px" width="17" height="18" viewBox="0 0 17 18"><rect x="0.7" y="0.7" width="12" height="14" fill="#fff" stroke="#1a73c8" stroke-width="1.4"/><rect x="0.7" y="0.7" width="12" height="3.5" fill="#1a73c8"/><path d="M5 4 V15" stroke="#1a73c8" stroke-width="1.2"/><circle cx="12.5" cy="13.5" r="3" fill="#1a73c8"/><circle cx="12.5" cy="13.5" r="1.1" fill="#fff"/></svg>
<svg style="left:1772px;top:466px" width="2" height="17" viewBox="0 0 2 17"><rect x="0" y="1" width="2" height="2" fill="#b0a890"/><rect x="0" y="5" width="2" height="2" fill="#b0a890"/><rect x="0" y="9" width="2" height="2" fill="#b0a890"/><rect x="0" y="13" width="2" height="2" fill="#b0a890"/></svg>
<svg style="left:1820px;top:466px" width="2" height="17" viewBox="0 0 2 17"><rect x="0" y="1" width="2" height="2" fill="#b0a890"/><rect x="0" y="5" width="2" height="2" fill="#b0a890"/><rect x="0" y="9" width="2" height="2" fill="#b0a890"/><rect x="0" y="13" width="2" height="2" fill="#b0a890"/></svg>
<svg style="left:1784px;top:466px" width="12" height="17" viewBox="0 0 12 17"><path d="M2 7 A4.5 4.5 0 0 1 9.5 4 M10 10 A4.5 4.5 0 0 1 2.5 13" fill="none" stroke="#4a8fe0" stroke-width="1.6"/><path d="M8 1 L11 4.5 L7 5.5Z M4 15.5 L1 12 L5 11Z" fill="#4a8fe0"/></svg>
<svg style="left:1806px;top:472px" width="8" height="5" viewBox="0 0 8 5"><path d="M0 0 H8 L4 4.5Z" fill="#222"/></svg>
<svg style="left:1830px;top:467px" width="16" height="14" viewBox="0 0 16 14"><path d="M7 1 L1 7 L7 13 V9.5 H15 V4.5 H7Z" fill="#9a9a9a"/></svg>
<svg style="left:1854px;top:472px" width="8" height="5" viewBox="0 0 8 5"><path d="M0 0 H8 L4 4.5Z" fill="#888"/></svg>
<svg style="left:1870px;top:467px" width="16" height="14" viewBox="0 0 16 14"><path d="M9 1 L15 7 L9 13 V9.5 H1 V4.5 H9Z" fill="#9a9a9a"/></svg>
<svg style="left:1894px;top:472px" width="8" height="5" viewBox="0 0 8 5"><path d="M0 0 H8 L4 4.5Z" fill="#888"/></svg>
<div class="a" style="left:580px;top:490px;width:1327px;height:35px;background:#f0f0f0;border-top:1px solid #b4b4b4;border-left:1px solid #b4b4b4;box-sizing:border-box"></div>
<div class="a" style="left:581px;top:491px;width:1px;height:32px;background:#fcfcfc"></div>
<div class="a" style="left:581px;top:523px;width:1326px;height:1px;background:#fcfcfc"></div>
<svg style="left:589px;top:500px" width="15" height="15" viewBox="0 0 15 15"><circle cx="7" cy="7" r="6.4" fill="none" stroke="#a8a8a8" stroke-width="1.2"/><path d="M3.8 7.2 L6.2 9.6 L10.4 4.8" fill="none" stroke="#a8a8a8" stroke-width="1.2"/></svg>
<div class="t" style="left:609px;top:497px;height:21px;line-height:21px;font-size:12px;color:#8e8e8e">保存</div>
<svg style="left:645px;top:501px" width="13" height="13" viewBox="0 0 13 13"><rect x="0.6" y="0.6" width="11.4" height="11.4" fill="none" stroke="#a8a8a8" stroke-width="1.1"/><path d="M3.5 3.5 L9 9 M9 3.5 L3.5 9" stroke="#a8a8a8" stroke-width="1"/></svg>
<div class="t" style="left:663px;top:497px;height:21px;line-height:21px;font-size:12px;color:#8e8e8e">取消</div>
<svg style="left:699px;top:500px" width="14" height="15" viewBox="0 0 14 15"><path d="M2.5 0.5 H13 L11.5 2 V13 H1 L0 14.2 H10 L11.5 13" fill="#a8a8a8"/><path d="M2.5 1 H12 V13 H1.5Z" fill="#a8a8a8"/><circle cx="6.5" cy="9" r="2.2" fill="#f0f0f0"/><circle cx="6.5" cy="9" r="1" fill="#a8a8a8"/></svg>
<div class="t" style="left:718px;top:497px;height:21px;line-height:21px;font-size:12px;color:#8e8e8e">脚本</div>
<div class="a" style="left:752px;top:498px;width:1px;height:19px;background:#707070"></div>
<svg style="left:763px;top:501px" width="16" height="14" viewBox="0 0 16 14"><rect x="0" y="0" width="14" height="1.8" fill="#1a87d6"/><rect x="0" y="4.5" width="9" height="1.8" fill="#1a87d6"/><rect x="0" y="9" width="6" height="1.8" fill="#1a87d6"/><path d="M7 13.2 L14.5 6" stroke="#1a87d6" stroke-width="2"/></svg>
<svg style="left:787px;top:501px" width="16" height="14" viewBox="0 0 16 14"><rect x="0" y="0" width="14" height="1.8" fill="#1a87d6"/><rect x="0" y="4.5" width="6" height="1.8" fill="#1a87d6"/><rect x="0" y="9" width="6" height="1.8" fill="#1a87d6"/><path d="M11 4.5 V13.5 M6.5 9 H15.5" stroke="#1a9a2a" stroke-width="2.2"/></svg>
<div class="a" style="left:810px;top:499px;width:16px;height:17px;background:#fafafa"></div>
<svg style="left:811px;top:501px" width="16" height="14" viewBox="0 0 16 14"><rect x="0" y="0" width="14" height="1.8" fill="#1a87d6"/><rect x="0" y="4.5" width="3" height="1.8" fill="#1a87d6"/><rect x="0" y="9" width="3" height="1.8" fill="#1a87d6"/><path d="M7.5 4.5 V13.5 M3 9 H12" stroke="#1a9a2a" stroke-width="2.2"/><circle cx="14" cy="5.5" r="1.6" fill="#7ac0f0"/></svg>
<svg style="left:835px;top:501px" width="16" height="14" viewBox="0 0 16 14"><rect x="0" y="0" width="14" height="1.8" fill="#1a87d6"/><rect x="0" y="4.5" width="3" height="1.8" fill="#1a87d6"/><rect x="0" y="9" width="3" height="1.8" fill="#1a87d6"/><path d="M6.2 4.5 Q4.5 8.5 6.2 12.5 M12.8 4.5 Q14.5 8.5 12.8 12.5" fill="none" stroke="#1a87d6" stroke-width="1.3"/><path d="M9.5 6 V11 M7 8.5 H12" stroke="#1a9a2a" stroke-width="1.4"/></svg>
<svg style="left:859px;top:501px" width="16" height="14" viewBox="0 0 16 14"><rect x="0" y="0" width="14" height="1.8" fill="#1a87d6"/><rect x="0" y="4.5" width="6" height="1.8" fill="#1a87d6"/><rect x="0" y="9" width="6" height="1.8" fill="#1a87d6"/><rect x="7" y="8" width="8" height="2.2" fill="#e02020"/></svg>
<svg style="left:883px;top:500px" width="2" height="16" viewBox="0 0 2 16"><rect x="0" y="1" width="2" height="2" fill="#b0a890"/><rect x="0" y="5" width="2" height="2" fill="#b0a890"/><rect x="0" y="9" width="2" height="2" fill="#b0a890"/><rect x="0" y="13" width="2" height="2" fill="#b0a890"/></svg>
<svg style="left:917px;top:500px" width="2" height="16" viewBox="0 0 2 16"><rect x="0" y="1" width="2" height="2" fill="#b0a890"/><rect x="0" y="5" width="2" height="2" fill="#b0a890"/><rect x="0" y="9" width="2" height="2" fill="#b0a890"/><rect x="0" y="13" width="2" height="2" fill="#b0a890"/></svg>
<svg style="left:1093px;top:500px" width="2" height="16" viewBox="0 0 2 16"><rect x="0" y="1" width="2" height="2" fill="#b0a890"/><rect x="0" y="5" width="2" height="2" fill="#b0a890"/><rect x="0" y="9" width="2" height="2" fill="#b0a890"/><rect x="0" y="13" width="2" height="2" fill="#b0a890"/></svg>
<svg style="left:893px;top:501px" width="14" height="13" viewBox="0 0 14 13"><path d="M6.5 11 V2.5" stroke="#1a87d6" stroke-width="2"/><path d="M3 5 L6.5 1 L10 5Z" fill="#1a87d6"/><path d="M0.7 8 V12 H12.3 V8" fill="none" stroke="#1a6ac4" stroke-width="1.2"/></svg>
<svg style="left:924px;top:501px" width="14" height="13" viewBox="0 0 14 13"><rect x="0.6" y="0.6" width="12.8" height="11.8" fill="none" stroke="#2a5cb0" stroke-width="1.2"/><path d="M0.6 4.4 H13.4 M0.6 8.4 H13.4 M4.8 4.4 V12.4 M9 4.4 V12.4" stroke="#2a5cb0" stroke-width="1.1"/></svg>
<div class="t" style="left:943px;top:497px;height:21px;line-height:21px;font-size:12px">网格</div>
<svg style="left:981px;top:501px" width="15" height="14" viewBox="0 0 15 14"><path d="M0.5 0.8 H8.5 M4.5 0.8 V12.8 M2.5 12.8 H6.5" stroke="#3a6bc4" stroke-width="1.1" fill="none"/><path d="M7 8.5 H9.5" stroke="#3a6bc4" stroke-width="1"/><path d="M13 6 L10.5 8.5 L13 11" stroke="#3a8fe0" fill="none" stroke-width="1"/></svg>
<div class="t" style="left:999px;top:497px;height:21px;line-height:21px;font-size:12px">文本</div>
<svg style="left:1039px;top:500px" width="14" height="15" viewBox="0 0 14 15"><path d="M0.6 0.6 H7 L10.4 4 V7 M7 13.4 H0.6 V0.6" fill="none" stroke="#3a6bc4" stroke-width="1.2"/><path d="M7 0.6 V4 H10.4" fill="none" stroke="#3a6bc4" stroke-width="1"/><circle cx="10" cy="11" r="3.2" fill="#3d8fe8"/><path d="M10 9.5 V11 H11.5" stroke="#fff" fill="none" stroke-width="0.9"/></svg>
<div class="t" style="left:1057px;top:497px;height:21px;line-height:21px;font-size:12px">记录</div>
<svg style="left:1105px;top:500px" width="13" height="15" viewBox="0 0 13 15"><path d="M1 7 V3 H10" fill="none" stroke="#3a6bc4" stroke-width="1.4"/><path d="M8.5 0.5 L11.5 3 L8.5 5.5Z" fill="#3a6bc4"/><path d="M12 8 V12 H3" fill="none" stroke="#3a6bc4" stroke-width="1.4"/><path d="M4.5 9.5 L1.5 12 L4.5 14.5Z" fill="#3a6bc4"/></svg>
<div class="t" style="left:1124px;top:497px;height:21px;line-height:21px;font-size:12px">面板</div>
<svg style="left:1162px;top:506px" width="8" height="5" viewBox="0 0 8 5"><path d="M0 0 H8 L4 4.5Z" fill="#222"/></svg>
<div class="a" style="left:580px;top:524px;width:1327px;height:327px;background:#f0f0f0"></div>
<div class="a" style="left:580px;top:524px;width:1327px;height:1px;background:#b0b0b0"></div>
<div class="a" style="left:580px;top:552px;width:917px;height:277px;background:#fff;overflow:hidden"></div>
<div class="a" style="left:580px;top:525px;width:917px;height:304px;overflow:hidden">
<div class="a" style="left:0px;top:0px;width:1000px;height:27px;background:#f0f0f0"></div>
<div class="a" style="left:30px;top:0px;width:90px;height:27px;background:#80bbea"></div>
<div class="a" style="left:120px;top:0px;width:1px;height:27px;background:#828282"></div>
<div class="t" style="left:55px;top:1px;height:27px;line-height:27px;font-size:12.1px">rule_id</div>
<svg style="left:100px;top:7px" width="9" height="14" viewBox="0 0 9 14"><path d="M0.5 0.5 H8 L5.3 4 V13 L3.2 10.5 V4Z" fill="#6ab8ec" stroke="#1f8ad8" stroke-width="0.9"/></svg>
<svg style="left:110px;top:7px" width="7" height="15" viewBox="0 0 7 15"><path d="M3.5 0 L6.5 3.5 H4.3 V6 H2.7 V3.5 H0.5Z M3.5 14 L6.5 10.5 H4.3 V8 H2.7 V10.5 H0.5Z" fill="#1f8ad8"/></svg>
<div class="a" style="left:207px;top:0px;width:1px;height:27px;background:#828282"></div>
<div class="t" style="left:126px;top:1px;height:27px;line-height:27px;font-size:11.2px;color:#1a8cd8;letter-spacing:-0.5px">123</div>
<div class="t" style="left:146px;top:1px;height:27px;line-height:27px;font-size:12.1px">active</div>
<svg style="left:187px;top:7px" width="9" height="14" viewBox="0 0 9 14"><path d="M0.5 0.5 H8 L5.3 4 V13 L3.2 10.5 V4Z" fill="#6ab8ec" stroke="#1f8ad8" stroke-width="0.9"/></svg>
<svg style="left:197px;top:7px" width="7" height="15" viewBox="0 0 7 15"><path d="M3.5 0 L6.5 3.5 H4.3 V6 H2.7 V3.5 H0.5Z M3.5 14 L6.5 10.5 H4.3 V8 H2.7 V10.5 H0.5Z" fill="#1f8ad8"/></svg>
<div class="a" style="left:315px;top:0px;width:1px;height:27px;background:#828282"></div>
<svg style="left:213px;top:9px" width="17" height="10" viewBox="0 0 17 10"><text x="0" y="8" font-family="Liberation Sans" font-weight="bold" font-size="9.6" fill="#1a7fd0" stroke="#1a7fd0" stroke-width="0.8" letter-spacing="-0.4" transform="scale(0.88,0.95)">ABC</text></svg>
<div class="t" style="left:233px;top:1px;height:27px;line-height:27px;font-size:12.1px">username</div>
<svg style="left:295px;top:7px" width="9" height="14" viewBox="0 0 9 14"><path d="M0.5 0.5 H8 L5.3 4 V13 L3.2 10.5 V4Z" fill="#6ab8ec" stroke="#1f8ad8" stroke-width="0.9"/></svg>
<svg style="left:305px;top:7px" width="7" height="15" viewBox="0 0 7 15"><path d="M3.5 0 L6.5 3.5 H4.3 V6 H2.7 V3.5 H0.5Z M3.5 14 L6.5 10.5 H4.3 V8 H2.7 V10.5 H0.5Z" fill="#1f8ad8"/></svg>
<div class="a" style="left:442px;top:0px;width:1px;height:27px;background:#828282"></div>
<svg style="left:321px;top:9px" width="17" height="10" viewBox="0 0 17 10"><text x="0" y="8" font-family="Liberation Sans" font-weight="bold" font-size="9.6" fill="#1a7fd0" stroke="#1a7fd0" stroke-width="0.8" letter-spacing="-0.4" transform="scale(0.88,0.95)">ABC</text></svg>
<div class="t" style="left:341px;top:1px;height:27px;line-height:27px;font-size:12.1px">schemaname</div>
<svg style="left:422px;top:7px" width="9" height="14" viewBox="0 0 9 14"><path d="M0.5 0.5 H8 L5.3 4 V13 L3.2 10.5 V4Z" fill="#6ab8ec" stroke="#1f8ad8" stroke-width="0.9"/></svg>
<svg style="left:432px;top:7px" width="7" height="15" viewBox="0 0 7 15"><path d="M3.5 0 L6.5 3.5 H4.3 V6 H2.7 V3.5 H0.5Z M3.5 14 L6.5 10.5 H4.3 V8 H2.7 V10.5 H0.5Z" fill="#1f8ad8"/></svg>
<div class="a" style="left:530px;top:0px;width:1px;height:27px;background:#828282"></div>
<div class="t" style="left:448px;top:1px;height:27px;line-height:27px;font-size:11.2px;color:#1a8cd8;letter-spacing:-0.5px">123</div>
<div class="t" style="left:468px;top:1px;height:27px;line-height:27px;font-size:12.1px">flagIN</div>
<svg style="left:510px;top:7px" width="9" height="14" viewBox="0 0 9 14"><path d="M0.5 0.5 H8 L5.3 4 V13 L3.2 10.5 V4Z" fill="#6ab8ec" stroke="#1f8ad8" stroke-width="0.9"/></svg>
<svg style="left:520px;top:7px" width="7" height="15" viewBox="0 0 7 15"><path d="M3.5 0 L6.5 3.5 H4.3 V6 H2.7 V3.5 H0.5Z M3.5 14 L6.5 10.5 H4.3 V8 H2.7 V10.5 H0.5Z" fill="#1f8ad8"/></svg>
<div class="a" style="left:644px;top:0px;width:1px;height:27px;background:#828282"></div>
<svg style="left:536px;top:9px" width="17" height="10" viewBox="0 0 17 10"><text x="0" y="8" font-family="Liberation Sans" font-weight="bold" font-size="9.6" fill="#1a7fd0" stroke="#1a7fd0" stroke-width="0.8" letter-spacing="-0.4" transform="scale(0.88,0.95)">ABC</text></svg>
<div class="t" style="left:556px;top:1px;height:27px;line-height:27px;font-size:12.1px">client_addr</div>
<svg style="left:624px;top:7px" width="9" height="14" viewBox="0 0 9 14"><path d="M0.5 0.5 H8 L5.3 4 V13 L3.2 10.5 V4Z" fill="#6ab8ec" stroke="#1f8ad8" stroke-width="0.9"/></svg>
<svg style="left:634px;top:7px" width="7" height="15" viewBox="0 0 7 15"><path d="M3.5 0 L6.5 3.5 H4.3 V6 H2.7 V3.5 H0.5Z M3.5 14 L6.5 10.5 H4.3 V8 H2.7 V10.5 H0.5Z" fill="#1f8ad8"/></svg>
<div class="a" style="left:759px;top:0px;width:1px;height:27px;background:#828282"></div>
<svg style="left:650px;top:9px" width="17" height="10" viewBox="0 0 17 10"><text x="0" y="8" font-family="Liberation Sans" font-weight="bold" font-size="9.6" fill="#1a7fd0" stroke="#1a7fd0" stroke-width="0.8" letter-spacing="-0.4" transform="scale(0.88,0.95)">ABC</text></svg>
<div class="t" style="left:670px;top:1px;height:27px;line-height:27px;font-size:12.1px">proxy_addr</div>
<svg style="left:739px;top:7px" width="9" height="14" viewBox="0 0 9 14"><path d="M0.5 0.5 H8 L5.3 4 V13 L3.2 10.5 V4Z" fill="#6ab8ec" stroke="#1f8ad8" stroke-width="0.9"/></svg>
<svg style="left:749px;top:7px" width="7" height="15" viewBox="0 0 7 15"><path d="M3.5 0 L6.5 3.5 H4.3 V6 H2.7 V3.5 H0.5Z M3.5 14 L6.5 10.5 H4.3 V8 H2.7 V10.5 H0.5Z" fill="#1f8ad8"/></svg>
<div class="a" style="left:872px;top:0px;width:1px;height:27px;background:#828282"></div>
<div class="t" style="left:765px;top:1px;height:27px;line-height:27px;font-size:11.2px;color:#1a8cd8;letter-spacing:-0.5px">123</div>
<div class="t" style="left:785px;top:1px;height:27px;line-height:27px;font-size:12.1px">proxy_port</div>
<svg style="left:852px;top:7px" width="9" height="14" viewBox="0 0 9 14"><path d="M0.5 0.5 H8 L5.3 4 V13 L3.2 10.5 V4Z" fill="#6ab8ec" stroke="#1f8ad8" stroke-width="0.9"/></svg>
<svg style="left:862px;top:7px" width="7" height="15" viewBox="0 0 7 15"><path d="M3.5 0 L6.5 3.5 H4.3 V6 H2.7 V3.5 H0.5Z M3.5 14 L6.5 10.5 H4.3 V8 H2.7 V10.5 H0.5Z" fill="#1f8ad8"/></svg>
<div class="a" style="left:1020px;top:0px;width:1px;height:27px;background:#828282"></div>
<svg style="left:878px;top:9px" width="17" height="10" viewBox="0 0 17 10"><text x="0" y="8" font-family="Liberation Sans" font-weight="bold" font-size="9.6" fill="#1a7fd0" stroke="#1a7fd0" stroke-width="0.8" letter-spacing="-0.4" transform="scale(0.88,0.95)">ABC</text></svg>
<div class="t" style="left:898px;top:1px;height:27px;line-height:27px;font-size:12.1px">digest</div>
<svg style="left:35px;top:6px" width="20" height="17" viewBox="0 0 20 17"><text x="0" y="12.5" font-family="Liberation Sans" font-size="11.2px" fill="#1a8cd8" letter-spacing="-0.5">123</text><rect x="9" y="8" width="8" height="8" fill="#1a8cd8"/><circle cx="13" cy="11" r="1.7" fill="none" stroke="#fff" stroke-width="1.1"/><path d="M14.4 11.5 V14.5 H11.8" fill="none" stroke="#fff" stroke-width="1.1"/></svg>
<div class="a" style="left:29px;top:0px;width:1px;height:27px;background:#000"></div>
<div class="a" style="left:0px;top:27px;width:1000px;height:1px;background:#6e6e6e"></div>
<div class="a" style="left:0px;top:26px;width:28px;height:1px;background:#fff"></div>
<div class="a" style="left:28px;top:0px;width:1px;height:27px;background:#fff"></div>
<div class="a" style="left:0px;top:27px;width:30px;height:1px;background:#000"></div>
<div class="a" style="left:30px;top:28px;width:900px;height:19px;background:#bdd5ed"></div>
<div class="a" style="left:0px;top:28px;width:29px;height:19px;background:#76b2e6"></div>
<div class="a" style="left:0px;top:46px;width:29px;height:1px;background:#000"></div>
<div class="t" style="left:4px;top:28px;height:19px;line-height:19px;font-size:12.5px">1</div>
<div class="a" style="left:120px;top:28px;width:1px;height:19px;background:#e8e8e8"></div>
<div class="a" style="left:207px;top:28px;width:1px;height:19px;background:#e8e8e8"></div>
<div class="a" style="left:315px;top:28px;width:1px;height:19px;background:#e8e8e8"></div>
<div class="a" style="left:442px;top:28px;width:1px;height:19px;background:#e8e8e8"></div>
<div class="a" style="left:530px;top:28px;width:1px;height:19px;background:#e8e8e8"></div>
<div class="a" style="left:644px;top:28px;width:1px;height:19px;background:#e8e8e8"></div>
<div class="a" style="left:759px;top:28px;width:1px;height:19px;background:#e8e8e8"></div>
<div class="a" style="left:872px;top:28px;width:1px;height:19px;background:#e8e8e8"></div>
<div class="a" style="left:1020px;top:28px;width:1px;height:19px;background:#e8e8e8"></div>
<div class="t" style="left:29px;top:28px;width:84px;text-align:right;height:19px;line-height:19px;font-size:12.5px;color:#fff">1</div>
<div class="t" style="left:120px;top:28px;width:80px;text-align:right;height:19px;line-height:19px;font-size:12.5px;color:#000">1</div>
<div class="t" style="left:213px;top:28px;height:19px;line-height:19px;font-size:12.5px;color:#a0a0a0">[NULL]</div>
<div class="t" style="left:321px;top:28px;height:19px;line-height:19px;font-size:12.5px;color:#a0a0a0">[NULL]</div>
<div class="t" style="left:442px;top:28px;width:81px;text-align:right;height:19px;line-height:19px;font-size:12.5px;color:#000">0</div>
<div class="t" style="left:536px;top:28px;height:19px;line-height:19px;font-size:12.5px;color:#a0a0a0">[NULL]</div>
<div class="t" style="left:650px;top:28px;height:19px;line-height:19px;font-size:12.5px;color:#a0a0a0">[NULL]</div>
<div class="t" style="left:759px;top:28px;width:106px;text-align:right;height:19px;line-height:19px;font-size:12.5px;color:#a0a0a0">[NULL]</div>
<div class="t" style="left:878px;top:28px;height:19px;line-height:19px;font-size:12.5px;color:#000;letter-spacing:-0.55px">0xC19B</div>
<div class="a" style="left:30px;top:47px;width:900px;height:19px;background:#fff"></div>
<div class="a" style="left:0px;top:47px;width:29px;height:19px;background:#f0f0f0"></div>
<div class="a" style="left:0px;top:65px;width:29px;height:1px;background:#000"></div>
<div class="t" style="left:4px;top:47px;height:19px;line-height:19px;font-size:12.5px">2</div>
<div class="a" style="left:120px;top:47px;width:1px;height:19px;background:#e8e8e8"></div>
<div class="a" style="left:207px;top:47px;width:1px;height:19px;background:#e8e8e8"></div>
<div class="a" style="left:315px;top:47px;width:1px;height:19px;background:#e8e8e8"></div>
<div class="a" style="left:442px;top:47px;width:1px;height:19px;background:#e8e8e8"></div>
<div class="a" style="left:530px;top:47px;width:1px;height:19px;background:#e8e8e8"></div>
<div class="a" style="left:644px;top:47px;width:1px;height:19px;background:#e8e8e8"></div>
<div class="a" style="left:759px;top:47px;width:1px;height:19px;background:#e8e8e8"></div>
<div class="a" style="left:872px;top:47px;width:1px;height:19px;background:#e8e8e8"></div>
<div class="a" style="left:1020px;top:47px;width:1px;height:19px;background:#e8e8e8"></div>
<div class="t" style="left:29px;top:47px;width:84px;text-align:right;height:19px;line-height:19px;font-size:12.5px;color:#000">2</div>
<div class="t" style="left:120px;top:47px;width:80px;text-align:right;height:19px;line-height:19px;font-size:12.5px;color:#000">1</div>
<div class="t" style="left:213px;top:47px;height:19px;line-height:19px;font-size:12.5px;color:#a0a0a0">[NULL]</div>
<div class="t" style="left:321px;top:47px;height:19px;line-height:19px;font-size:12.5px;color:#a0a0a0">[NULL]</div>
<div class="t" style="left:442px;top:47px;width:81px;text-align:right;height:19px;line-height:19px;font-size:12.5px;color:#000">0</div>
<div class="t" style="left:536px;top:47px;height:19px;line-height:19px;font-size:12.5px;color:#a0a0a0">[NULL]</div>
<div class="t" style="left:650px;top:47px;height:19px;line-height:19px;font-size:12.5px;color:#a0a0a0">[NULL]</div>
<div class="t" style="left:759px;top:47px;width:106px;text-align:right;height:19px;line-height:19px;font-size:12.5px;color:#a0a0a0">[NULL]</div>
<div class="t" style="left:878px;top:47px;height:19px;line-height:19px;font-size:12.5px;color:#000;letter-spacing:-0.55px">0xCF06</div>
<div class="a" style="left:30px;top:66px;width:900px;height:19px;background:#dce6f2"></div>
<div class="a" style="left:0px;top:66px;width:29px;height:19px;background:#f0f0f0"></div>
<div class="a" style="left:0px;top:84px;width:29px;height:1px;background:#000"></div>
<div class="t" style="left:4px;top:66px;height:19px;line-height:19px;font-size:12.5px">3</div>
<div class="a" style="left:120px;top:66px;width:1px;height:19px;background:#e8e8e8"></div>
<div class="a" style="left:207px;top:66px;width:1px;height:19px;background:#e8e8e8"></div>
<div class="a" style="left:315px;top:66px;width:1px;height:19px;background:#e8e8e8"></div>
<div class="a" style="left:442px;top:66px;width:1px;height:19px;background:#e8e8e8"></div>
<div class="a" style="left:530px;top:66px;width:1px;height:19px;background:#e8e8e8"></div>
<div class="a" style="left:644px;top:66px;width:1px;height:19px;background:#e8e8e8"></div>
<div class="a" style="left:759px;top:66px;width:1px;height:19px;background:#e8e8e8"></div>
<div class="a" style="left:872px;top:66px;width:1px;height:19px;background:#e8e8e8"></div>
<div class="a" style="left:1020px;top:66px;width:1px;height:19px;background:#e8e8e8"></div>
<div class="t" style="left:29px;top:66px;width:84px;text-align:right;height:19px;line-height:19px;font-size:12.5px;color:#000">3</div>
<div class="t" style="left:120px;top:66px;width:80px;text-align:right;height:19px;line-height:19px;font-size:12.5px;color:#000">1</div>
<div class="t" style="left:213px;top:66px;height:19px;line-height:19px;font-size:12.5px;color:#a0a0a0">[NULL]</div>
<div class="t" style="left:321px;top:66px;height:19px;line-height:19px;font-size:12.5px;color:#a0a0a0">[NULL]</div>
<div class="t" style="left:442px;top:66px;width:81px;text-align:right;height:19px;line-height:19px;font-size:12.5px;color:#000">0</div>
<div class="t" style="left:536px;top:66px;height:19px;line-height:19px;font-size:12.5px;color:#a0a0a0">[NULL]</div>
<div class="t" style="left:650px;top:66px;height:19px;line-height:19px;font-size:12.5px;color:#a0a0a0">[NULL]</div>
<div class="t" style="left:759px;top:66px;width:106px;text-align:right;height:19px;line-height:19px;font-size:12.5px;color:#a0a0a0">[NULL]</div>
<div class="t" style="left:878px;top:66px;height:19px;line-height:19px;font-size:12.5px;color:#000;letter-spacing:-0.55px">0x4D0E</div>
<div class="a" style="left:30px;top:85px;width:900px;height:19px;background:#fff"></div>
<div class="a" style="left:0px;top:85px;width:29px;height:19px;background:#f0f0f0"></div>
<div class="a" style="left:0px;top:103px;width:29px;height:1px;background:#000"></div>
<div class="t" style="left:4px;top:85px;height:19px;line-height:19px;font-size:12.5px">4</div>
<div class="a" style="left:120px;top:85px;width:1px;height:19px;background:#e8e8e8"></div>
<div class="a" style="left:207px;top:85px;width:1px;height:19px;background:#e8e8e8"></div>
<div class="a" style="left:315px;top:85px;width:1px;height:19px;background:#e8e8e8"></div>
<div class="a" style="left:442px;top:85px;width:1px;height:19px;background:#e8e8e8"></div>
<div class="a" style="left:530px;top:85px;width:1px;height:19px;background:#e8e8e8"></div>
<div class="a" style="left:644px;top:85px;width:1px;height:19px;background:#e8e8e8"></div>
<div class="a" style="left:759px;top:85px;width:1px;height:19px;background:#e8e8e8"></div>
<div class="a" style="left:872px;top:85px;width:1px;height:19px;background:#e8e8e8"></div>
<div class="a" style="left:1020px;top:85px;width:1px;height:19px;background:#e8e8e8"></div>
<div class="t" style="left:29px;top:85px;width:84px;text-align:right;height:19px;line-height:19px;font-size:12.5px;color:#000">4</div>
<div class="t" style="left:120px;top:85px;width:80px;text-align:right;height:19px;line-height:19px;font-size:12.5px;color:#000">1</div>
<div class="t" style="left:213px;top:85px;height:19px;line-height:19px;font-size:12.5px;color:#a0a0a0">[NULL]</div>
<div class="t" style="left:321px;top:85px;height:19px;line-height:19px;font-size:12.5px;color:#a0a0a0">[NULL]</div>
<div class="t" style="left:442px;top:85px;width:81px;text-align:right;height:19px;line-height:19px;font-size:12.5px;color:#000">0</div>
<div class="t" style="left:536px;top:85px;height:19px;line-height:19px;font-size:12.5px;color:#a0a0a0">[NULL]</div>
<div class="t" style="left:650px;top:85px;height:19px;line-height:19px;font-size:12.5px;color:#a0a0a0">[NULL]</div>
<div class="t" style="left:759px;top:85px;width:106px;text-align:right;height:19px;line-height:19px;font-size:12.5px;color:#a0a0a0">[NULL]</div>
<div class="t" style="left:878px;top:85px;height:19px;line-height:19px;font-size:12.5px;color:#000;letter-spacing:-0.55px">0x38DE</div>
<div class="a" style="left:30px;top:104px;width:900px;height:19px;background:#dce6f2"></div>
<div class="a" style="left:0px;top:104px;width:29px;height:19px;background:#f0f0f0"></div>
<div class="a" style="left:0px;top:122px;width:29px;height:1px;background:#000"></div>
<div class="t" style="left:4px;top:104px;height:19px;line-height:19px;font-size:12.5px">5</div>
<div class="a" style="left:120px;top:104px;width:1px;height:19px;background:#e8e8e8"></div>
<div class="a" style="left:207px;top:104px;width:1px;height:19px;background:#e8e8e8"></div>
<div class="a" style="left:315px;top:104px;width:1px;height:19px;background:#e8e8e8"></div>
<div class="a" style="left:442px;top:104px;width:1px;height:19px;background:#e8e8e8"></div>
<div class="a" style="left:530px;top:104px;width:1px;height:19px;background:#e8e8e8"></div>
<div class="a" style="left:644px;top:104px;width:1px;height:19px;background:#e8e8e8"></div>
<div class="a" style="left:759px;top:104px;width:1px;height:19px;background:#e8e8e8"></div>
<div class="a" style="left:872px;top:104px;width:1px;height:19px;background:#e8e8e8"></div>
<div class="a" style="left:1020px;top:104px;width:1px;height:19px;background:#e8e8e8"></div>
<div class="t" style="left:29px;top:104px;width:84px;text-align:right;height:19px;line-height:19px;font-size:12.5px;color:#000">5</div>
<div class="t" style="left:120px;top:104px;width:80px;text-align:right;height:19px;line-height:19px;font-size:12.5px;color:#000">1</div>
<div class="t" style="left:213px;top:104px;height:19px;line-height:19px;font-size:12.5px;color:#a0a0a0">[NULL]</div>
<div class="t" style="left:321px;top:104px;height:19px;line-height:19px;font-size:12.5px;color:#a0a0a0">[NULL]</div>
<div class="t" style="left:442px;top:104px;width:81px;text-align:right;height:19px;line-height:19px;font-size:12.5px;color:#000">0</div>
<div class="t" style="left:536px;top:104px;height:19px;line-height:19px;font-size:12.5px;color:#a0a0a0">[NULL]</div>
<div class="t" style="left:650px;top:104px;height:19px;line-height:19px;font-size:12.5px;color:#a0a0a0">[NULL]</div>
<div class="t" style="left:759px;top:104px;width:106px;text-align:right;height:19px;line-height:19px;font-size:12.5px;color:#a0a0a0">[NULL]</div>
<div class="t" style="left:878px;top:104px;height:19px;line-height:19px;font-size:12.5px;color:#000;letter-spacing:-0.55px">0xEC56</div>
<div class="a" style="left:30px;top:123px;width:900px;height:19px;background:#fff"></div>
<div class="a" style="left:0px;top:123px;width:29px;height:19px;background:#f0f0f0"></div>
<div class="a" style="left:0px;top:141px;width:29px;height:1px;background:#000"></div>
<div class="t" style="left:4px;top:123px;height:19px;line-height:19px;font-size:12.5px">6</div>
<div class="a" style="left:120px;top:123px;width:1px;height:19px;background:#e8e8e8"></div>
<div class="a" style="left:207px;top:123px;width:1px;height:19px;background:#e8e8e8"></div>
<div class="a" style="left:315px;top:123px;width:1px;height:19px;background:#e8e8e8"></div>
<div class="a" style="left:442px;top:123px;width:1px;height:19px;background:#e8e8e8"></div>
<div class="a" style="left:530px;top:123px;width:1px;height:19px;background:#e8e8e8"></div>
<div class="a" style="left:644px;top:123px;width:1px;height:19px;background:#e8e8e8"></div>
<div class="a" style="left:759px;top:123px;width:1px;height:19px;background:#e8e8e8"></div>
<div class="a" style="left:872px;top:123px;width:1px;height:19px;background:#e8e8e8"></div>
<div class="a" style="left:1020px;top:123px;width:1px;height:19px;background:#e8e8e8"></div>
<div class="t" style="left:29px;top:123px;width:84px;text-align:right;height:19px;line-height:19px;font-size:12.5px;color:#000">6</div>
<div class="t" style="left:120px;top:123px;width:80px;text-align:right;height:19px;line-height:19px;font-size:12.5px;color:#000">1</div>
<div class="t" style="left:213px;top:123px;height:19px;line-height:19px;font-size:12.5px;color:#a0a0a0">[NULL]</div>
<div class="t" style="left:321px;top:123px;height:19px;line-height:19px;font-size:12.5px;color:#a0a0a0">[NULL]</div>
<div class="t" style="left:442px;top:123px;width:81px;text-align:right;height:19px;line-height:19px;font-size:12.5px;color:#000">0</div>
<div class="t" style="left:536px;top:123px;height:19px;line-height:19px;font-size:12.5px;color:#a0a0a0">[NULL]</div>
<div class="t" style="left:650px;top:123px;height:19px;line-height:19px;font-size:12.5px;color:#a0a0a0">[NULL]</div>
<div class="t" style="left:759px;top:123px;width:106px;text-align:right;height:19px;line-height:19px;font-size:12.5px;color:#a0a0a0">[NULL]</div>
<div class="t" style="left:878px;top:123px;height:19px;line-height:19px;font-size:12.5px;color:#000;letter-spacing:-0.55px">0xDE5D</div>
<div class="a" style="left:30px;top:142px;width:900px;height:19px;background:#dce6f2"></div>
<div class="a" style="left:0px;top:142px;width:29px;height:19px;background:#f0f0f0"></div>
<div class="a" style="left:0px;top:160px;width:29px;height:1px;background:#000"></div>
<div class="t" style="left:4px;top:142px;height:19px;line-height:19px;font-size:12.5px">7</div>
<div class="a" style="left:120px;top:142px;width:1px;height:19px;background:#e8e8e8"></div>
<div class="a" style="left:207px;top:142px;width:1px;height:19px;background:#e8e8e8"></div>
<div class="a" style="left:315px;top:142px;width:1px;height:19px;background:#e8e8e8"></div>
<div class="a" style="left:442px;top:142px;width:1px;height:19px;background:#e8e8e8"></div>
<div class="a" style="left:530px;top:142px;width:1px;height:19px;background:#e8e8e8"></div>
<div class="a" style="left:644px;top:142px;width:1px;height:19px;background:#e8e8e8"></div>
<div class="a" style="left:759px;top:142px;width:1px;height:19px;background:#e8e8e8"></div>
<div class="a" style="left:872px;top:142px;width:1px;height:19px;background:#e8e8e8"></div>
<div class="a" style="left:1020px;top:142px;width:1px;height:19px;background:#e8e8e8"></div>
<div class="t" style="left:29px;top:142px;width:84px;text-align:right;height:19px;line-height:19px;font-size:12.5px;color:#000">7</div>
<div class="t" style="left:120px;top:142px;width:80px;text-align:right;height:19px;line-height:19px;font-size:12.5px;color:#000">1</div>
<div class="t" style="left:213px;top:142px;height:19px;line-height:19px;font-size:12.5px;color:#a0a0a0">[NULL]</div>
<div class="t" style="left:321px;top:142px;height:19px;line-height:19px;font-size:12.5px;color:#a0a0a0">[NULL]</div>
<div class="t" style="left:442px;top:142px;width:81px;text-align:right;height:19px;line-height:19px;font-size:12.5px;color:#000">0</div>
<div class="t" style="left:536px;top:142px;height:19px;line-height:19px;font-size:12.5px;color:#a0a0a0">[NULL]</div>
<div class="t" style="left:650px;top:142px;height:19px;line-height:19px;font-size:12.5px;color:#a0a0a0">[NULL]</div>
<div class="t" style="left:759px;top:142px;width:106px;text-align:right;height:19px;line-height:19px;font-size:12.5px;color:#a0a0a0">[NULL]</div>
<div class="t" style="left:878px;top:142px;height:19px;line-height:19px;font-size:12.5px;color:#000;letter-spacing:-0.55px">0xDA24</div>
<div class="a" style="left:30px;top:161px;width:900px;height:19px;background:#fff"></div>
<div class="a" style="left:0px;top:161px;width:29px;height:19px;background:#f0f0f0"></div>
<div class="a" style="left:0px;top:179px;width:29px;height:1px;background:#000"></div>
<div class="t" style="left:4px;top:161px;height:19px;line-height:19px;font-size:12.5px">8</div>
<div class="a" style="left:120px;top:161px;width:1px;height:19px;background:#e8e8e8"></div>
<div class="a" style="left:207px;top:161px;width:1px;height:19px;background:#e8e8e8"></div>
<div class="a" style="left:315px;top:161px;width:1px;height:19px;background:#e8e8e8"></div>
<div class="a" style="left:442px;top:161px;width:1px;height:19px;background:#e8e8e8"></div>
<div class="a" style="left:530px;top:161px;width:1px;height:19px;background:#e8e8e8"></div>
<div class="a" style="left:644px;top:161px;width:1px;height:19px;background:#e8e8e8"></div>
<div class="a" style="left:759px;top:161px;width:1px;height:19px;background:#e8e8e8"></div>
<div class="a" style="left:872px;top:161px;width:1px;height:19px;background:#e8e8e8"></div>
<div class="a" style="left:1020px;top:161px;width:1px;height:19px;background:#e8e8e8"></div>
<div class="t" style="left:29px;top:161px;width:84px;text-align:right;height:19px;line-height:19px;font-size:12.5px;color:#000">8</div>
<div class="t" style="left:120px;top:161px;width:80px;text-align:right;height:19px;line-height:19px;font-size:12.5px;color:#000">1</div>
<div class="t" style="left:213px;top:161px;height:19px;line-height:19px;font-size:12.5px;color:#a0a0a0">[NULL]</div>
<div class="t" style="left:321px;top:161px;height:19px;line-height:19px;font-size:12.5px;color:#a0a0a0">[NULL]</div>
<div class="t" style="left:442px;top:161px;width:81px;text-align:right;height:19px;line-height:19px;font-size:12.5px;color:#000">0</div>
<div class="t" style="left:536px;top:161px;height:19px;line-height:19px;font-size:12.5px;color:#a0a0a0">[NULL]</div>
<div class="t" style="left:650px;top:161px;height:19px;line-height:19px;font-size:12.5px;color:#a0a0a0">[NULL]</div>
<div class="t" style="left:759px;top:161px;width:106px;text-align:right;height:19px;line-height:19px;font-size:12.5px;color:#a0a0a0">[NULL]</div>
<div class="t" style="left:878px;top:161px;height:19px;line-height:19px;font-size:12.5px;color:#000;letter-spacing:-0.55px">0x1BD0</div>
<div class="a" style="left:30px;top:180px;width:900px;height:19px;background:#dce6f2"></div>
<div class="a" style="left:0px;top:180px;width:29px;height:19px;background:#f0f0f0"></div>
<div class="a" style="left:0px;top:198px;width:29px;height:1px;background:#000"></div>
<div class="t" style="left:4px;top:180px;height:19px;line-height:19px;font-size:12.5px">9</div>
<div class="a" style="left:120px;top:180px;width:1px;height:19px;background:#e8e8e8"></div>
<div class="a" style="left:207px;top:180px;width:1px;height:19px;background:#e8e8e8"></div>
<div class="a" style="left:315px;top:180px;width:1px;height:19px;background:#e8e8e8"></div>
<div class="a" style="left:442px;top:180px;width:1px;height:19px;background:#e8e8e8"></div>
<div class="a" style="left:530px;top:180px;width:1px;height:19px;background:#e8e8e8"></div>
<div class="a" style="left:644px;top:180px;width:1px;height:19px;background:#e8e8e8"></div>
<div class="a" style="left:759px;top:180px;width:1px;height:19px;background:#e8e8e8"></div>
<div class="a" style="left:872px;top:180px;width:1px;height:19px;background:#e8e8e8"></div>
<div class="a" style="left:1020px;top:180px;width:1px;height:19px;background:#e8e8e8"></div>
<div class="t" style="left:29px;top:180px;width:84px;text-align:right;height:19px;line-height:19px;font-size:12.5px;color:#000">9</div>
<div class="t" style="left:120px;top:180px;width:80px;text-align:right;height:19px;line-height:19px;font-size:12.5px;color:#000">1</div>
<div class="t" style="left:213px;top:180px;height:19px;line-height:19px;font-size:12.5px;color:#a0a0a0">[NULL]</div>
<div class="t" style="left:321px;top:180px;height:19px;line-height:19px;font-size:12.5px;color:#a0a0a0">[NULL]</div>
<div class="t" style="left:442px;top:180px;width:81px;text-align:right;height:19px;line-height:19px;font-size:12.5px;color:#000">0</div>
<div class="t" style="left:536px;top:180px;height:19px;line-height:19px;font-size:12.5px;color:#a0a0a0">[NULL]</div>
<div class="t" style="left:650px;top:180px;height:19px;line-height:19px;font-size:12.5px;color:#a0a0a0">[NULL]</div>
<div class="t" style="left:759px;top:180px;width:106px;text-align:right;height:19px;line-height:19px;font-size:12.5px;color:#a0a0a0">[NULL]</div>
<div class="t" style="left:878px;top:180px;height:19px;line-height:19px;font-size:12.5px;color:#000;letter-spacing:-0.55px">0x5D65</div>
<div class="a" style="left:30px;top:199px;width:900px;height:19px;background:#fff"></div>
<div class="a" style="left:0px;top:199px;width:29px;height:19px;background:#f0f0f0"></div>
<div class="a" style="left:0px;top:217px;width:29px;height:1px;background:#000"></div>
<div class="t" style="left:4px;top:199px;height:19px;line-height:19px;font-size:12.5px">10</div>
<div class="a" style="left:120px;top:199px;width:1px;height:19px;background:#e8e8e8"></div>
<div class="a" style="left:207px;top:199px;width:1px;height:19px;background:#e8e8e8"></div>
<div class="a" style="left:315px;top:199px;width:1px;height:19px;background:#e8e8e8"></div>
<div class="a" style="left:442px;top:199px;width:1px;height:19px;background:#e8e8e8"></div>
<div class="a" style="left:530px;top:199px;width:1px;height:19px;background:#e8e8e8"></div>
<div class="a" style="left:644px;top:199px;width:1px;height:19px;background:#e8e8e8"></div>
<div class="a" style="left:759px;top:199px;width:1px;height:19px;background:#e8e8e8"></div>
<div class="a" style="left:872px;top:199px;width:1px;height:19px;background:#e8e8e8"></div>
<div class="a" style="left:1020px;top:199px;width:1px;height:19px;background:#e8e8e8"></div>
<div class="t" style="left:29px;top:199px;width:84px;text-align:right;height:19px;line-height:19px;font-size:12.5px;color:#000">10</div>
<div class="t" style="left:120px;top:199px;width:80px;text-align:right;height:19px;line-height:19px;font-size:12.5px;color:#000">1</div>
<div class="t" style="left:213px;top:199px;height:19px;line-height:19px;font-size:12.5px;color:#a0a0a0">[NULL]</div>
<div class="t" style="left:321px;top:199px;height:19px;line-height:19px;font-size:12.5px;color:#a0a0a0">[NULL]</div>
<div class="t" style="left:442px;top:199px;width:81px;text-align:right;height:19px;line-height:19px;font-size:12.5px;color:#000">0</div>
<div class="t" style="left:536px;top:199px;height:19px;line-height:19px;font-size:12.5px;color:#a0a0a0">[NULL]</div>
<div class="t" style="left:650px;top:199px;height:19px;line-height:19px;font-size:12.5px;color:#a0a0a0">[NULL]</div>
<div class="t" style="left:759px;top:199px;width:106px;text-align:right;height:19px;line-height:19px;font-size:12.5px;color:#a0a0a0">[NULL]</div>
<div class="t" style="left:878px;top:199px;height:19px;line-height:19px;font-size:12.5px;color:#000;letter-spacing:-0.55px">0x3CB1</div>
<div class="a" style="left:30px;top:218px;width:900px;height:19px;background:#dce6f2"></div>
<div class="a" style="left:0px;top:218px;width:29px;height:19px;background:#f0f0f0"></div>
<div class="a" style="left:0px;top:236px;width:29px;height:1px;background:#000"></div>
<div class="t" style="left:4px;top:218px;height:19px;line-height:19px;font-size:12.5px">11</div>
<div class="a" style="left:120px;top:218px;width:1px;height:19px;background:#e8e8e8"></div>
<div class="a" style="left:207px;top:218px;width:1px;height:19px;background:#e8e8e8"></div>
<div class="a" style="left:315px;top:218px;width:1px;height:19px;background:#e8e8e8"></div>
<div class="a" style="left:442px;top:218px;width:1px;height:19px;background:#e8e8e8"></div>
<div class="a" style="left:530px;top:218px;width:1px;height:19px;background:#e8e8e8"></div>
<div class="a" style="left:644px;top:218px;width:1px;height:19px;background:#e8e8e8"></div>
<div class="a" style="left:759px;top:218px;width:1px;height:19px;background:#e8e8e8"></div>
<div class="a" style="left:872px;top:218px;width:1px;height:19px;background:#e8e8e8"></div>
<div class="a" style="left:1020px;top:218px;width:1px;height:19px;background:#e8e8e8"></div>
<div class="t" style="left:29px;top:218px;width:84px;text-align:right;height:19px;line-height:19px;font-size:12.5px;color:#000">11</div>
<div class="t" style="left:120px;top:218px;width:80px;text-align:right;height:19px;line-height:19px;font-size:12.5px;color:#000">1</div>
<div class="t" style="left:213px;top:218px;height:19px;line-height:19px;font-size:12.5px;color:#a0a0a0">[NULL]</div>
<div class="t" style="left:321px;top:218px;height:19px;line-height:19px;font-size:12.5px;color:#a0a0a0">[NULL]</div>
<div class="t" style="left:442px;top:218px;width:81px;text-align:right;height:19px;line-height:19px;font-size:12.5px;color:#000">0</div>
<div class="t" style="left:536px;top:218px;height:19px;line-height:19px;font-size:12.5px;color:#a0a0a0">[NULL]</div>
<div class="t" style="left:650px;top:218px;height:19px;line-height:19px;font-size:12.5px;color:#a0a0a0">[NULL]</div>
<div class="t" style="left:759px;top:218px;width:106px;text-align:right;height:19px;line-height:19px;font-size:12.5px;color:#a0a0a0">[NULL]</div>
<div class="t" style="left:878px;top:218px;height:19px;line-height:19px;font-size:12.5px;color:#000;letter-spacing:-0.55px">0xA14B</div>
<div class="a" style="left:30px;top:237px;width:900px;height:19px;background:#fff"></div>
<div class="a" style="left:0px;top:237px;width:29px;height:19px;background:#f0f0f0"></div>
<div class="a" style="left:0px;top:255px;width:29px;height:1px;background:#000"></div>
<div class="t" style="left:4px;top:237px;height:19px;line-height:19px;font-size:12.5px">12</div>
<div class="a" style="left:120px;top:237px;width:1px;height:19px;background:#e8e8e8"></div>
<div class="a" style="left:207px;top:237px;width:1px;height:19px;background:#e8e8e8"></div>
<div class="a" style="left:315px;top:237px;width:1px;height:19px;background:#e8e8e8"></div>
<div class="a" style="left:442px;top:237px;width:1px;height:19px;background:#e8e8e8"></div>
<div class="a" style="left:530px;top:237px;width:1px;height:19px;background:#e8e8e8"></div>
<div class="a" style="left:644px;top:237px;width:1px;height:19px;background:#e8e8e8"></div>
<div class="a" style="left:759px;top:237px;width:1px;height:19px;background:#e8e8e8"></div>
<div class="a" style="left:872px;top:237px;width:1px;height:19px;background:#e8e8e8"></div>
<div class="a" style="left:1020px;top:237px;width:1px;height:19px;background:#e8e8e8"></div>
<div class="t" style="left:29px;top:237px;width:84px;text-align:right;height:19px;line-height:19px;font-size:12.5px;color:#000">12</div>
<div class="t" style="left:120px;top:237px;width:80px;text-align:right;height:19px;line-height:19px;font-size:12.5px;color:#000">1</div>
<div class="t" style="left:213px;top:237px;height:19px;line-height:19px;font-size:12.5px;color:#a0a0a0">[NULL]</div>
<div class="t" style="left:321px;top:237px;height:19px;line-height:19px;font-size:12.5px;color:#a0a0a0">[NULL]</div>
<div class="t" style="left:442px;top:237px;width:81px;text-align:right;height:19px;line-height:19px;font-size:12.5px;color:#000">0</div>
<div class="t" style="left:536px;top:237px;height:19px;line-height:19px;font-size:12.5px;color:#a0a0a0">[NULL]</div>
<div class="t" style="left:650px;top:237px;height:19px;line-height:19px;font-size:12.5px;color:#a0a0a0">[NULL]</div>
<div class="t" style="left:759px;top:237px;width:106px;text-align:right;height:19px;line-height:19px;font-size:12.5px;color:#a0a0a0">[NULL]</div>
<div class="t" style="left:878px;top:237px;height:19px;line-height:19px;font-size:12.5px;color:#000;letter-spacing:-0.55px">0x096D</div>
<div class="a" style="left:30px;top:256px;width:900px;height:19px;background:#dce6f2"></div>
<div class="a" style="left:0px;top:256px;width:29px;height:19px;background:#f0f0f0"></div>
<div class="a" style="left:0px;top:274px;width:29px;height:1px;background:#000"></div>
<div class="t" style="left:4px;top:256px;height:19px;line-height:19px;font-size:12.5px">13</div>
<div class="a" style="left:120px;top:256px;width:1px;height:19px;background:#e8e8e8"></div>
<div class="a" style="left:207px;top:256px;width:1px;height:19px;background:#e8e8e8"></div>
<div class="a" style="left:315px;top:256px;width:1px;height:19px;background:#e8e8e8"></div>
<div class="a" style="left:442px;top:256px;width:1px;height:19px;background:#e8e8e8"></div>
<div class="a" style="left:530px;top:256px;width:1px;height:19px;background:#e8e8e8"></div>
<div class="a" style="left:644px;top:256px;width:1px;height:19px;background:#e8e8e8"></div>
<div class="a" style="left:759px;top:256px;width:1px;height:19px;background:#e8e8e8"></div>
<div class="a" style="left:872px;top:256px;width:1px;height:19px;background:#e8e8e8"></div>
<div class="a" style="left:1020px;top:256px;width:1px;height:19px;background:#e8e8e8"></div>
<div class="t" style="left:29px;top:256px;width:84px;text-align:right;height:19px;line-height:19px;font-size:12.5px;color:#000">13</div>
<div class="t" style="left:120px;top:256px;width:80px;text-align:right;height:19px;line-height:19px;font-size:12.5px;color:#000">1</div>
<div class="t" style="left:213px;top:256px;height:19px;line-height:19px;font-size:12.5px;color:#a0a0a0">[NULL]</div>
<div class="t" style="left:321px;top:256px;height:19px;line-height:19px;font-size:12.5px;color:#a0a0a0">[NULL]</div>
<div class="t" style="left:442px;top:256px;width:81px;text-align:right;height:19px;line-height:19px;font-size:12.5px;color:#000">0</div>
<div class="t" style="left:536px;top:256px;height:19px;line-height:19px;font-size:12.5px;color:#a0a0a0">[NULL]</div>
<div class="t" style="left:650px;top:256px;height:19px;line-height:19px;font-size:12.5px;color:#a0a0a0">[NULL]</div>
<div class="t" style="left:759px;top:256px;width:106px;text-align:right;height:19px;line-height:19px;font-size:12.5px;color:#a0a0a0">[NULL]</div>
<div class="t" style="left:878px;top:256px;height:19px;line-height:19px;font-size:12.5px;color:#000;letter-spacing:-0.55px">0x99E8I</div>
<div class="a" style="left:30px;top:275px;width:900px;height:19px;background:#fff"></div>
<div class="a" style="left:0px;top:275px;width:29px;height:19px;background:#f0f0f0"></div>
<div class="a" style="left:0px;top:293px;width:29px;height:1px;background:#000"></div>
<div class="t" style="left:4px;top:275px;height:19px;line-height:19px;font-size:12.5px">14</div>
<div class="a" style="left:120px;top:275px;width:1px;height:19px;background:#e8e8e8"></div>
<div class="a" style="left:207px;top:275px;width:1px;height:19px;background:#e8e8e8"></div>
<div class="a" style="left:315px;top:275px;width:1px;height:19px;background:#e8e8e8"></div>
<div class="a" style="left:442px;top:275px;width:1px;height:19px;background:#e8e8e8"></div>
<div class="a" style="left:530px;top:275px;width:1px;height:19px;background:#e8e8e8"></div>
<div class="a" style="left:644px;top:275px;width:1px;height:19px;background:#e8e8e8"></div>
<div class="a" style="left:759px;top:275px;width:1px;height:19px;background:#e8e8e8"></div>
<div class="a" style="left:872px;top:275px;width:1px;height:19px;background:#e8e8e8"></div>
<div class="a" style="left:1020px;top:275px;width:1px;height:19px;background:#e8e8e8"></div>
<div class="t" style="left:29px;top:275px;width:84px;text-align:right;height:19px;line-height:19px;font-size:12.5px;color:#000">14</div>
<div class="t" style="left:120px;top:275px;width:80px;text-align:right;height:19px;line-height:19px;font-size:12.5px;color:#000">1</div>
<div class="t" style="left:213px;top:275px;height:19px;line-height:19px;font-size:12.5px;color:#a0a0a0">[NULL]</div>
<div class="t" style="left:321px;top:275px;height:19px;line-height:19px;font-size:12.5px;color:#a0a0a0">[NULL]</div>
<div class="t" style="left:442px;top:275px;width:81px;text-align:right;height:19px;line-height:19px;font-size:12.5px;color:#000">0</div>
<div class="t" style="left:536px;top:275px;height:19px;line-height:19px;font-size:12.5px;color:#a0a0a0">[NULL]</div>
<div class="t" style="left:650px;top:275px;height:19px;line-height:19px;font-size:12.5px;color:#a0a0a0">[NULL]</div>
<div class="t" style="left:759px;top:275px;width:106px;text-align:right;height:19px;line-height:19px;font-size:12.5px;color:#a0a0a0">[NULL]</div>
<div class="t" style="left:878px;top:275px;height:19px;line-height:19px;font-size:12.5px;color:#000;letter-spacing:-0.55px">0xB156</div>
<div class="a" style="left:30px;top:294px;width:900px;height:19px;background:#dce6f2"></div>
<div class="a" style="left:0px;top:294px;width:29px;height:19px;background:#f0f0f0"></div>
<div class="a" style="left:0px;top:312px;width:29px;height:1px;background:#000"></div>
<div class="t" style="left:4px;top:294px;height:19px;line-height:19px;font-size:12.5px">15</div>
<div class="a" style="left:120px;top:294px;width:1px;height:19px;background:#e8e8e8"></div>
<div class="a" style="left:207px;top:294px;width:1px;height:19px;background:#e8e8e8"></div>
<div class="a" style="left:315px;top:294px;width:1px;height:19px;background:#e8e8e8"></div>
<div class="a" style="left:442px;top:294px;width:1px;height:19px;background:#e8e8e8"></div>
<div class="a" style="left:530px;top:294px;width:1px;height:19px;background:#e8e8e8"></div>
<div class="a" style="left:644px;top:294px;width:1px;height:19px;background:#e8e8e8"></div>
<div class="a" style="left:759px;top:294px;width:1px;height:19px;background:#e8e8e8"></div>
<div class="a" style="left:872px;top:294px;width:1px;height:19px;background:#e8e8e8"></div>
<div class="a" style="left:1020px;top:294px;width:1px;height:19px;background:#e8e8e8"></div>
<div class="t" style="left:29px;top:294px;width:84px;text-align:right;height:19px;line-height:19px;font-size:12.5px;color:#000">15</div>
<div class="t" style="left:120px;top:294px;width:80px;text-align:right;height:19px;line-height:19px;font-size:12.5px;color:#000">1</div>
<div class="t" style="left:213px;top:294px;height:19px;line-height:19px;font-size:12.5px;color:#a0a0a0">[NULL]</div>
<div class="t" style="left:321px;top:294px;height:19px;line-height:19px;font-size:12.5px;color:#a0a0a0">[NULL]</div>
<div class="t" style="left:442px;top:294px;width:81px;text-align:right;height:19px;line-height:19px;font-size:12.5px;color:#000">0</div>
<div class="t" style="left:536px;top:294px;height:19px;line-height:19px;font-size:12.5px;color:#a0a0a0">[NULL]</div>
<div class="t" style="left:650px;top:294px;height:19px;line-height:19px;font-size:12.5px;color:#a0a0a0">[NULL]</div>
<div class="t" style="left:759px;top:294px;width:106px;text-align:right;height:19px;line-height:19px;font-size:12.5px;color:#a0a0a0">[NULL]</div>
<div class="t" style="left:878px;top:294px;height:19px;line-height:19px;font-size:12.5px;color:#000;letter-spacing:-0.55px">0xD0E4</div>
<div class="a" style="left:29px;top:27px;width:1px;height:277px;background:#000"></div>
<div class="a" style="left:29px;top:27px;width:92px;height:20px;background:#6aaae0;border:2px solid #000;box-sizing:border-box"></div>
<div class="t" style="left:29px;top:27px;width:84px;text-align:right;height:19px;line-height:19px;font-size:12.5px;color:#fff">1</div>
</div>
<div class="a" style="left:1497px;top:525px;width:16px;height:304px;background:#f0f0f0"></div>
<svg style="left:1499px;top:530px" width="11" height="7" viewBox="0 0 11 7"><path d="M1 5.5 L5 1.5 L9 5.5" fill="none" stroke="#444" stroke-width="1.5"/></svg>
<div class="a" style="left:1497px;top:542px;width:16px;height:20px;background:#cdcdcd"></div>
<svg style="left:1499px;top:817px" width="11" height="7" viewBox="0 0 11 7"><path d="M1 1.5 L5 5.5 L9 1.5" fill="none" stroke="#444" stroke-width="1.5"/></svg>
<div class="a" style="left:580px;top:829px;width:933px;height:16px;background:#f0f0f0"></div>
<svg style="left:584px;top:832px" width="8" height="10" viewBox="0 0 8 10"><path d="M6 1 L1.8 5 L6 9" fill="none" stroke="#444" stroke-width="1.6"/></svg>
<div class="a" style="left:597px;top:830px;width:194px;height:15px;background:#cdcdcd"></div>
<svg style="left:1485px;top:832px" width="8" height="10" viewBox="0 0 8 10"><path d="M2 1 L6.2 5 L2 9" fill="none" stroke="#444" stroke-width="1.6"/></svg>
<div class="a" style="left:580px;top:845px;width:937px;height:6px;background:#f0f0f0"></div>
<div class="a" style="left:737px;top:846px;width:53px;height:6px;background:#fff;border:1px solid #7a7a7a;box-sizing:border-box"></div>
<div class="a" style="left:584px;top:848px;width:2px;height:3px;background:#666"></div>
<div class="a" style="left:591px;top:848px;width:2px;height:3px;background:#666"></div>
<div class="a" style="left:596px;top:848px;width:2px;height:3px;background:#666"></div>
<div class="a" style="left:624px;top:848px;width:2px;height:3px;background:#666"></div>
<div class="a" style="left:642px;top:848px;width:2px;height:3px;background:#2a7fd4"></div>
<div class="a" style="left:662px;top:848px;width:2px;height:3px;background:#2a7fd4"></div>
<div class="a" style="left:671px;top:848px;width:3px;height:3px;background:#2a7fd4"></div>
<div class="a" style="left:682px;top:848px;width:1px;height:3px;background:#777"></div>
<div class="a" style="left:700px;top:848px;width:5px;height:3px;background:#1a8ad4"></div>
<div class="a" style="left:715px;top:848px;width:4px;height:3px;background:#1a8ad4"></div>
<div class="a" style="left:725px;top:848px;width:4px;height:3px;background:#1a8ad4"></div>
<div class="a" style="left:854px;top:848px;width:2px;height:3px;background:#555"></div>
<div class="a" style="left:1656px;top:849px;width:4px;height:2px;background:#1a8ad4"></div>
<div class="a" style="left:1513px;top:524px;width:394px;height:327px;background:#f0f0f0"></div>
<div class="a" style="left:1518px;top:548px;width:389px;height:298px;background:#fff"></div>
<div class="a" style="left:1627px;top:547px;width:280px;height:1px;background:#b4b4b4"></div>
<div class="a" style="left:1513px;top:523px;width:394px;height:1px;background:#fafafa"></div>
<div class="a" style="left:1513px;top:524px;width:394px;height:1px;background:#a8a8a8"></div>
<div class="a" style="left:1518px;top:524px;width:110px;height:2px;background:#a0a0a0"></div>
<div class="a" style="left:1627px;top:526px;width:1px;height:22px;background:#a0a0a0"></div>
<svg style="left:1521px;top:530px" width="14" height="14" viewBox="0 0 14 14"><rect x="0.6" y="1.2" width="2.6" height="11.6" rx="1.3" fill="none" stroke="#2a5cb0" stroke-width="1.1"/><path d="M1.9 0 V14" stroke="#2a5cb0" stroke-width="0.8"/><rect x="5.2" y="3" width="2.6" height="8" rx="1.3" fill="none" stroke="#3a8fe0" stroke-width="1.1"/><path d="M6.5 0 V14" stroke="#3a8fe0" stroke-width="0.8"/><rect x="9.8" y="2" width="2.6" height="9.5" rx="1.3" fill="none" stroke="#2a5cb0" stroke-width="1.1"/><path d="M11.1 0 V13" stroke="#2a5cb0" stroke-width="0.8"/></svg>
<div class="t" style="left:1537px;top:526px;height:22px;line-height:22px;font-size:12.5px">数值查看器</div>
<svg style="left:1610px;top:531px" width="11" height="11" viewBox="0 0 11 11"><path d="M1.8 1.8 L8.7 8.7 M8.7 1.8 L1.8 8.7" stroke="#606060" stroke-width="3.6" stroke-linecap="square"/><path d="M1.8 1.8 L8.7 8.7 M8.7 1.8 L1.8 8.7" stroke="#fff" stroke-width="1.7"/></svg>
<div class="t" style="left:1521px;top:549px;height:19px;line-height:19px;font-size:12.5px">1</div>
<svg style="left:1828px;top:530px" width="14" height="14" viewBox="0 0 14 14"><path d="M0.7 0.7 H11 L13.3 3 V13.3 H0.7Z" fill="#7fd07f" stroke="#2a9a2a" stroke-width="1.2"/><rect x="3.5" y="0.7" width="6.5" height="4" fill="#fff" stroke="#2a9a2a" stroke-width="1"/><rect x="7.5" y="1.4" width="1.4" height="2.4" fill="#2a9a2a"/></svg>
<div class="a" style="left:1847px;top:526px;width:23px;height:21px;background:#cce4f7;border:1px solid #7eb4ea;box-sizing:border-box"></div>
<svg style="left:1851px;top:530px" width="16" height="16" viewBox="0 0 16 16"><path d="M0.7 0.7 H11 L13.3 3 V13.3 H0.7Z" fill="#7fd07f" stroke="#2a9a2a" stroke-width="1.2"/><rect x="3.5" y="0.7" width="6.5" height="4" fill="#fff" stroke="#2a9a2a" stroke-width="1"/><rect x="7.5" y="1.4" width="1.4" height="2.4" fill="#2a9a2a"/><circle cx="12" cy="12.5" r="3.2" fill="#3d8fe8"/><path d="M12 11 V12.6 H13.4" stroke="#fff" fill="none" stroke-width="0.9"/></svg>
<svg style="left:1879px;top:532px" width="10" height="7" viewBox="0 0 10 7"><path d="M0.7 0.7 H9.3 L5 6Z" fill="none" stroke="#666" stroke-width="1"/></svg>
<div class="a" style="left:1899px;top:532px;width:8px;height:4px;background:#fff;border:1px solid #666;box-sizing:border-box"></div>
<svg style="left:0;top:0" width="1907" height="851"><path d="M1226.1 -0.4 L1276.9 36.4 L1269.7 40.3 L1298.0 46.5 L1281.3 22.8 L1280.5 30.9 L1226.9 -1.6Z" fill="#f25555"/></svg>
<svg style="left:0;top:0" width="1907" height="851"><path d="M627.4 396.4 L654.4 437.0 L646.1 438.4 L670.5 454.0 L663.0 426.0 L659.2 433.5 L628.6 395.6Z" fill="#f25555"/></svg>
<svg style="left:0;top:0" width="1907" height="851"><path d="M764.4 404.4 L782.3 434.2 L774.0 435.4 L798.0 451.6 L791.2 423.4 L787.2 430.8 L765.6 403.6Z" fill="#f25555"/></svg>
</body></html>
